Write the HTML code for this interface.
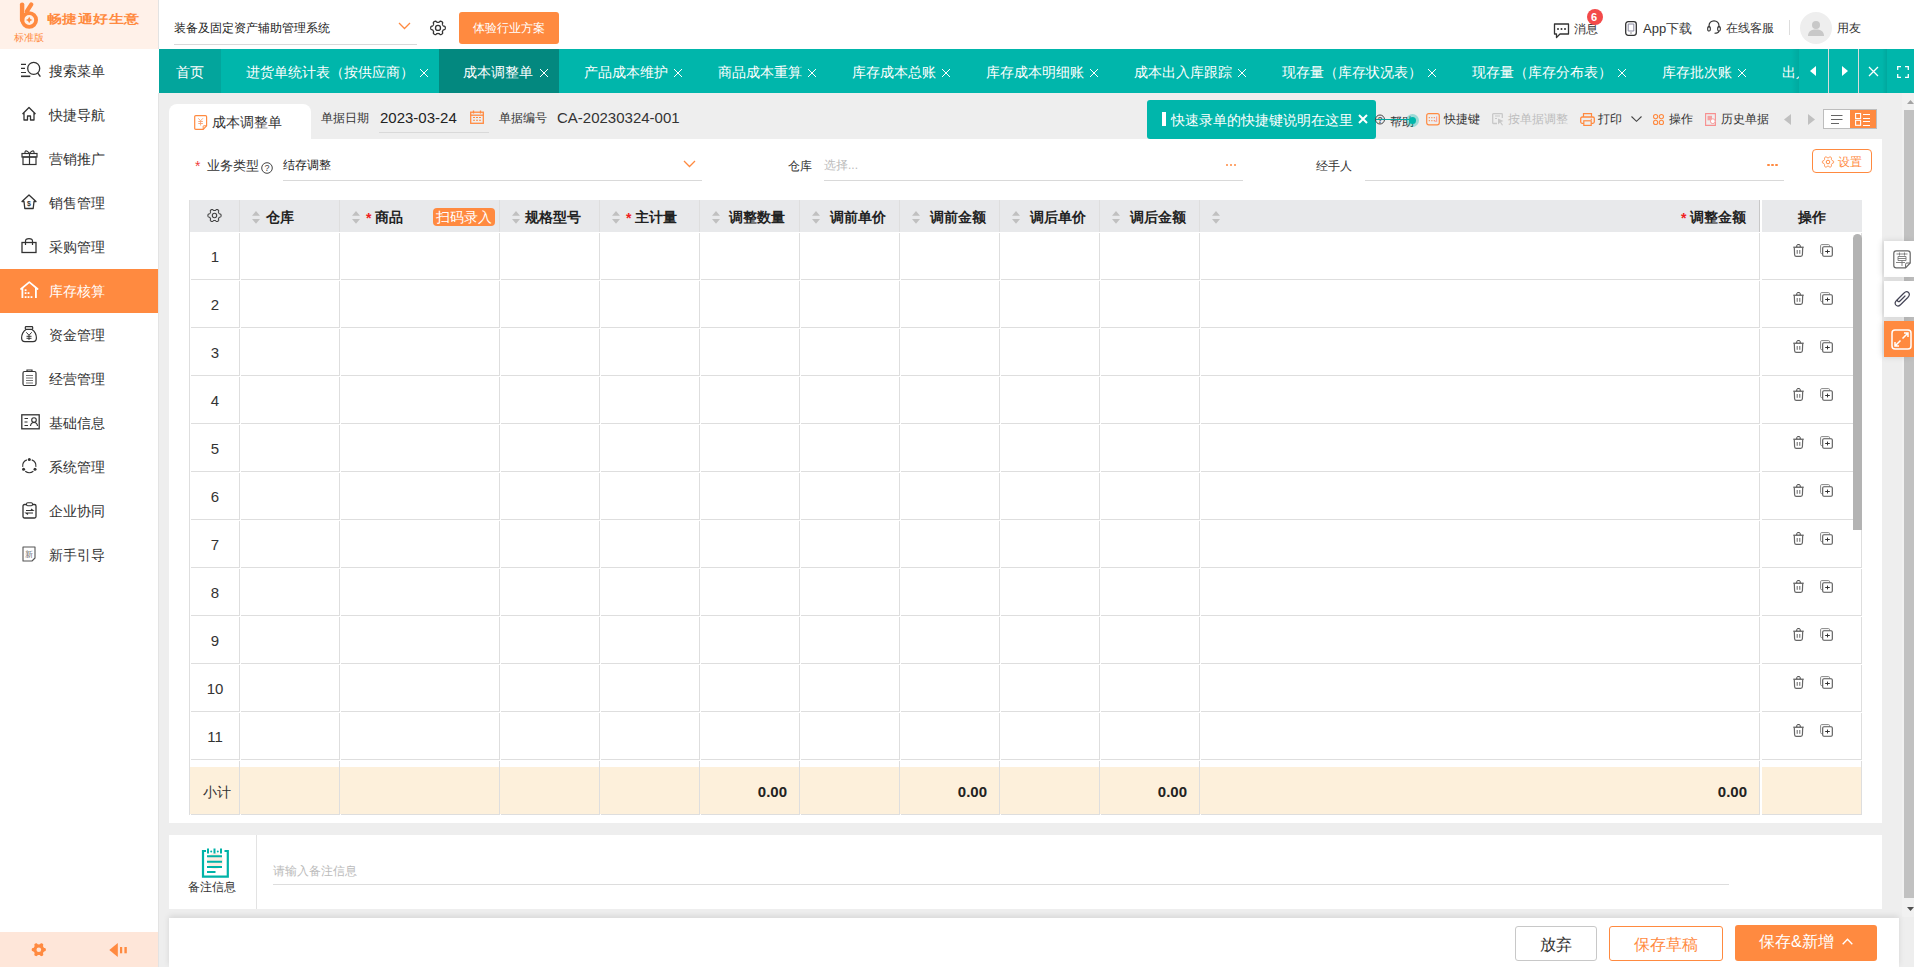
<!DOCTYPE html><html><head><meta charset="utf-8"><style>
*{box-sizing:border-box;margin:0;padding:0}
html,body{width:1914px;height:967px;overflow:hidden}
body{position:relative;background:#eeeeee;font-family:"Liberation Sans",sans-serif;color:#333;font-size:12px}
.a{position:absolute}
svg{display:block;position:absolute;overflow:visible}
.t{position:absolute;white-space:nowrap;line-height:1}
svg path:not([fill]){fill:none}
</style></head><body><div class="a" style="left:0px;top:0px;width:159px;height:967px;background:#fff;border-right:1px solid #e3e3e3"></div>
<div class="a" style="left:0px;top:0px;width:158px;height:49px;background:#fff1e9;"></div>
<svg style="left:16px;top:0px" width="30" height="32" viewBox="0 0 30 32"><path d="M6.1 4.6 V20" stroke="#ff8a40" stroke-width="4.4" stroke-linecap="round" fill="none"/><path d="M15.3 4.4 L10.8 11.3" stroke="#ff8a40" stroke-width="4.2" stroke-linecap="round"/><circle cx="13.2" cy="20" r="6.9" stroke="#ff8a40" stroke-width="3.8" fill="none"/><path d="M13.2 16.7 Q13.8 19.4 16.5 20 Q13.8 20.6 13.2 23.3 Q12.6 20.6 9.9 20 Q12.6 19.4 13.2 16.7Z" fill="#ff8a40"/></svg>
<div class="t" style="left:47px;top:13px;font-size:15px;color:#ff8a40;font-weight:bold;letter-spacing:0.4px;transform:scaleY(0.8);transform-origin:0 0">畅捷通好生意</div>
<div class="t" style="left:14px;top:33px;font-size:10px;color:#ff8a40;font-weight:normal;">标准版</div>
<svg style="left:20px;top:62px" width="20" height="16" viewBox="0 0 20 16"><path d="M1 2.3 H6 M1 6.4 H5 M1 10.5 H6" stroke="#333" stroke-width="1.2"/><path d="M1 14.3 H10.3" stroke="#333" stroke-width="1.6"/><circle cx="13.7" cy="6.4" r="6" stroke="#333" stroke-width="1.3" fill="none"/><path d="M17.6 10.8 L20.4 14.6" stroke="#333" stroke-width="1.4"/></svg>
<div class="t" style="left:49px;top:64px;font-size:14px;color:#333;font-weight:normal;">搜索菜单</div>
<svg style="left:21px;top:106px" width="16" height="15" viewBox="0 0 16 15"><path d="M1.5 8 L8 1.5 L14.5 8 M3 7 V14 H6.5 V10 H9.5 V14 H13 V7" stroke="#333" stroke-width="1.3" fill="none" stroke-linejoin="round"/></svg>
<div class="t" style="left:49px;top:108px;font-size:14px;color:#333;font-weight:normal;">快捷导航</div>
<svg style="left:21px;top:149px" width="17" height="17" viewBox="0 0 17 17"><rect x="1" y="4.5" width="15" height="3.5" stroke="#333" stroke-width="1.2" fill="none"/><rect x="2" y="8" width="13" height="7.5" stroke="#333" stroke-width="1.2" fill="none"/><path d="M8.5 4.5 V15.5" stroke="#333" stroke-width="1.2"/><path d="M8.5 4.5 C6 1 3.5 1 4 4.5 M8.5 4.5 C11 1 13.5 1 13 4.5" stroke="#333" stroke-width="1.1" fill="none"/></svg>
<div class="t" style="left:49px;top:152px;font-size:14px;color:#333;font-weight:normal;">营销推广</div>
<svg style="left:21px;top:194px" width="16" height="16" viewBox="0 0 16 16"><path d="M1 7.5 L8 1 L15 7.5 H13 L12.2 14.5 H3.8 L3 7.5 Z" stroke="#333" stroke-width="1.3" fill="none" stroke-linejoin="round"/><text x="8" y="11.5" font-size="7" text-anchor="middle" font-family="Liberation Sans" font-weight="bold" fill="#333">$</text></svg>
<div class="t" style="left:49px;top:196px;font-size:14px;color:#333;font-weight:normal;">销售管理</div>
<svg style="left:21px;top:237px" width="16" height="17" viewBox="0 0 16 17"><rect x="1" y="5.5" width="14" height="10" stroke="#333" stroke-width="1.3" fill="none"/><path d="M4.5 8 V4 C4.5 0.8 11.5 0.8 11.5 4 V8" stroke="#333" stroke-width="1.2" fill="none"/></svg>
<div class="t" style="left:49px;top:240px;font-size:14px;color:#333;font-weight:normal;">采购管理</div>
<div class="a" style="left:0px;top:269px;width:158px;height:44px;background:#ff8a40;"></div>
<svg style="left:20px;top:281px" width="18" height="17" viewBox="0 0 18 17"><path d="M1 8 L9.3 1.2 L17.6 8" stroke="#fff" stroke-width="1.7" fill="none" stroke-linejoin="round" stroke-linecap="round"/><path d="M2.4 7 V17 M15.9 7 V17" stroke="#fff" stroke-width="1.8"/><rect x="4.7" y="8.3" width="1.8" height="1.8" fill="#fff"/><rect x="4.7" y="11.2" width="1.8" height="1.8" fill="#fff"/><rect x="7.6" y="11.2" width="1.8" height="1.8" fill="#fff"/><rect x="4.7" y="15.2" width="1.8" height="1.8" fill="#fff"/><rect x="7.6" y="15.2" width="1.8" height="1.8" fill="#fff"/><rect x="10.6" y="15.2" width="1.8" height="1.8" fill="#fff"/></svg>
<div class="t" style="left:49px;top:284px;font-size:14px;color:#fff;font-weight:normal;">库存核算</div>
<svg style="left:21px;top:326px" width="16" height="17" viewBox="0 0 16 17"><rect x="4.3" y="0.7" width="7.4" height="2.6" rx="0.8" stroke="#333" stroke-width="1.2" fill="none"/><path d="M5 3.5 C1.5 6 0.6 9 0.6 12 C0.6 14.5 2 15.6 4 15.6 H12 C14 15.6 15.4 14.5 15.4 12 C15.4 9 14.5 6 11 3.5" stroke="#333" stroke-width="1.2" fill="none"/><path d="M5.3 6.3 L8 9.3 L10.7 6.3 M8 9.3 V14 M5.5 10.3 H10.5 M5.5 12.3 H10.5" stroke="#333" stroke-width="1" fill="none"/></svg>
<div class="t" style="left:49px;top:328px;font-size:14px;color:#333;font-weight:normal;">资金管理</div>
<svg style="left:21.5px;top:369px" width="15" height="18" viewBox="0 0 15 18"><rect x="1" y="2.5" width="13" height="14" rx="1.5" stroke="#333" stroke-width="1.2" fill="none"/><path d="M5 3 V1 H10 V3" stroke="#333" stroke-width="1.2" fill="none"/><path d="M4 6.5 H11 M4 9 H11 M4 11.5 H11 M4 14 H11" stroke="#777" stroke-width="1"/></svg>
<div class="t" style="left:49px;top:372px;font-size:14px;color:#333;font-weight:normal;">经营管理</div>
<svg style="left:21px;top:414px" width="19" height="16" viewBox="0 0 19 16"><rect x="0.8" y="0.8" width="17.4" height="14" stroke="#333" stroke-width="1.3" fill="none"/><path d="M3.5 4.5 H7 M3.5 8 H6.5 M3.5 11.5 H7" stroke="#333" stroke-width="1.1"/><circle cx="13" cy="6" r="2.3" stroke="#333" stroke-width="1.1" fill="none"/><path d="M9.5 12 C9.8 9 11 8.5 13 8.5 C15 8.5 16.2 9 16.5 12" stroke="#333" stroke-width="1.1" fill="none"/></svg>
<div class="t" style="left:49px;top:416px;font-size:14px;color:#333;font-weight:normal;">基础信息</div>
<svg style="left:21px;top:458px" width="17" height="15" viewBox="0 0 17 15"><g stroke="#333" stroke-width="1.1" fill="none"><path d="M10.77 1.88 A6.6 6.6 0 0 1 14.84 8.92"/><path d="M12.36 13.20 A6.6 6.6 0 0 1 4.24 13.20"/><path d="M1.76 8.92 A6.6 6.6 0 0 1 5.83 1.88"/></g><circle cx="8.30" cy="1.40" r="1.5" fill="#333"/><circle cx="14.02" cy="11.30" r="1.5" fill="#333"/><circle cx="2.58" cy="11.30" r="1.5" fill="#333"/></svg>
<div class="t" style="left:49px;top:460px;font-size:14px;color:#333;font-weight:normal;">系统管理</div>
<svg style="left:21.5px;top:502px" width="15" height="17" viewBox="0 0 15 17"><rect x="1" y="2.5" width="13" height="13.5" rx="1.5" stroke="#333" stroke-width="1.3" fill="none"/><rect x="4.5" y="0.8" width="6" height="3" rx="1.2" stroke="#333" stroke-width="1.1" fill="#fff"/><path d="M4 8.5 H11 L9 7 M11 11 H4 L6 12.5" stroke="#333" stroke-width="1.1" fill="none"/></svg>
<div class="t" style="left:49px;top:504px;font-size:14px;color:#333;font-weight:normal;">企业协同</div>
<svg style="left:21px;top:546px" width="16" height="16" viewBox="0 0 16 16"><path d="M2 1 H14 V12 L11 15 H2 Z" stroke="#555" stroke-width="1.1" fill="none" stroke-linejoin="round"/><text x="8" y="11" font-size="8" text-anchor="middle" fill="#666">新</text></svg>
<div class="t" style="left:49px;top:548px;font-size:14px;color:#333;font-weight:normal;">新手引导</div>
<div class="a" style="left:0px;top:932px;width:158px;height:35px;background:#fee6d9;"></div>
<svg style="left:31px;top:942px" width="15" height="15" viewBox="0 0 15 15"><path d="M14.90 7.70 L14.87 8.07 L14.78 8.43 L14.62 8.78 L14.38 9.10 L13.79 9.30 L13.19 9.45 L12.93 9.67 L12.72 9.89 L12.54 10.12 L12.39 10.35 L12.26 10.60 L12.15 10.86 L12.07 11.16 L12.01 11.49 L12.18 12.08 L12.30 12.70 L12.15 13.07 L11.93 13.38 L11.66 13.64 L11.35 13.85 L11.01 14.01 L10.65 14.11 L10.28 14.15 L9.88 14.10 L9.40 13.69 L8.98 13.25 L8.66 13.12 L8.36 13.05 L8.08 13.01 L7.80 13.00 L7.52 13.01 L7.24 13.05 L6.94 13.12 L6.62 13.25 L6.20 13.69 L5.72 14.10 L5.32 14.15 L4.95 14.11 L4.59 14.01 L4.25 13.85 L3.94 13.64 L3.67 13.38 L3.45 13.07 L3.30 12.70 L3.42 12.08 L3.59 11.49 L3.53 11.16 L3.45 10.86 L3.34 10.60 L3.21 10.35 L3.06 10.12 L2.88 9.89 L2.67 9.67 L2.41 9.45 L1.81 9.30 L1.22 9.10 L0.98 8.78 L0.82 8.43 L0.73 8.07 L0.70 7.70 L0.73 7.33 L0.82 6.97 L0.98 6.62 L1.22 6.30 L1.81 6.10 L2.41 5.95 L2.67 5.73 L2.88 5.51 L3.06 5.28 L3.21 5.05 L3.34 4.80 L3.45 4.54 L3.53 4.24 L3.59 3.91 L3.42 3.32 L3.30 2.70 L3.45 2.33 L3.67 2.02 L3.94 1.76 L4.25 1.55 L4.59 1.39 L4.95 1.29 L5.32 1.25 L5.72 1.30 L6.20 1.71 L6.62 2.15 L6.94 2.28 L7.24 2.35 L7.52 2.39 L7.80 2.40 L8.08 2.39 L8.36 2.35 L8.66 2.28 L8.98 2.15 L9.40 1.71 L9.88 1.30 L10.28 1.25 L10.65 1.29 L11.01 1.39 L11.35 1.55 L11.66 1.76 L11.93 2.02 L12.15 2.33 L12.30 2.70 L12.18 3.32 L12.01 3.91 L12.07 4.24 L12.15 4.54 L12.26 4.80 L12.39 5.05 L12.54 5.28 L12.72 5.51 L12.93 5.73 L13.19 5.95 L13.79 6.10 L14.38 6.30 L14.62 6.62 L14.78 6.97 L14.87 7.33 L14.90 7.70Z" fill="#ff8a40"/><circle cx="7.8" cy="7.7" r="2.3" fill="#fee6d9"/></svg>
<svg style="left:109px;top:943px" width="19" height="15" viewBox="0 0 19 15"><path d="M0.3 7 L8.8 0 V14 Z" fill="#ff8a40"/><rect x="11" y="4" width="2.2" height="6.3" fill="#ff8a40"/><rect x="15.4" y="4" width="2.4" height="6.3" fill="#ff8a40"/></svg>
<div class="a" style="left:159px;top:0px;width:1755px;height:49px;background:#fff;"></div>
<div class="t" style="left:174px;top:22px;font-size:12px;color:#222;font-weight:normal;">装备及固定资产辅助管理系统</div>
<div class="a" style="left:174px;top:44px;width:243px;height:1px;background:#d9d9d9;"></div>
<svg style="left:398px;top:22px" width="13" height="8" viewBox="0 0 13 8"><path d="M1 1 L6.5 6.5 L12 1" stroke="#ff8a40" stroke-width="1.3" fill="none"/></svg>
<svg style="left:429px;top:20px" width="18" height="16" viewBox="0 0 18 16"><path d="M16.30 7.90 L16.28 8.28 L16.20 8.66 L16.07 9.02 L15.86 9.36 L15.23 9.57 L14.60 9.72 L14.36 9.96 L14.17 10.20 L14.00 10.45 L13.85 10.70 L13.71 10.96 L13.58 11.23 L13.46 11.51 L13.37 11.84 L13.56 12.46 L13.69 13.11 L13.50 13.46 L13.26 13.76 L12.97 14.01 L12.65 14.22 L12.31 14.39 L11.94 14.51 L11.56 14.58 L11.17 14.57 L10.67 14.13 L10.22 13.66 L9.90 13.57 L9.59 13.53 L9.29 13.51 L9.00 13.50 L8.71 13.51 L8.41 13.53 L8.10 13.57 L7.78 13.66 L7.33 14.13 L6.83 14.57 L6.44 14.58 L6.06 14.51 L5.69 14.39 L5.35 14.22 L5.03 14.01 L4.74 13.76 L4.50 13.46 L4.31 13.11 L4.44 12.46 L4.63 11.84 L4.54 11.51 L4.42 11.23 L4.29 10.96 L4.15 10.70 L4.00 10.45 L3.83 10.20 L3.64 9.96 L3.40 9.72 L2.77 9.57 L2.14 9.36 L1.93 9.02 L1.80 8.66 L1.72 8.28 L1.70 7.90 L1.72 7.52 L1.80 7.14 L1.93 6.78 L2.14 6.44 L2.77 6.23 L3.40 6.08 L3.64 5.84 L3.83 5.60 L4.00 5.35 L4.15 5.10 L4.29 4.84 L4.42 4.57 L4.54 4.29 L4.63 3.96 L4.44 3.34 L4.31 2.69 L4.50 2.34 L4.74 2.04 L5.03 1.79 L5.35 1.58 L5.69 1.41 L6.06 1.29 L6.44 1.22 L6.83 1.23 L7.33 1.67 L7.78 2.14 L8.10 2.23 L8.41 2.27 L8.71 2.29 L9.00 2.30 L9.29 2.29 L9.59 2.27 L9.90 2.23 L10.22 2.14 L10.67 1.67 L11.17 1.23 L11.56 1.22 L11.94 1.29 L12.31 1.41 L12.65 1.58 L12.97 1.79 L13.26 2.04 L13.50 2.34 L13.69 2.69 L13.56 3.34 L13.37 3.96 L13.46 4.29 L13.58 4.57 L13.71 4.84 L13.85 5.10 L14.00 5.35 L14.17 5.60 L14.36 5.84 L14.60 6.08 L15.23 6.23 L15.86 6.44 L16.07 6.78 L16.20 7.14 L16.28 7.52 L16.30 7.90Z" stroke="#333" stroke-width="1.3" fill="none"/><circle cx="9" cy="7.9" r="2.5" stroke="#333" stroke-width="1.3" fill="none"/></svg>
<div class="a" style="left:459px;top:12px;width:100px;height:32px;background:#ff8a40;border-radius:3px"></div>
<div class="t" style="left:473px;top:22px;font-size:12px;color:#fff;font-weight:normal;">体验行业方案</div>
<svg style="left:1553px;top:22px" width="17" height="17" viewBox="0 0 17 17"><path d="M1.5 2 H15.5 V12 H7 L3.5 15.5 V12 H1.5 Z" stroke="#333" stroke-width="1.3" fill="none" stroke-linejoin="round"/><circle cx="5" cy="7" r="1" fill="#333"/><circle cx="8.5" cy="7" r="1" fill="#333"/><circle cx="12" cy="7" r="1" fill="#333"/></svg>
<div class="t" style="left:1574px;top:23px;font-size:12px;color:#333;font-weight:normal;">消息</div>
<div class="a" style="left:1587px;top:9px;width:16px;height:16px;background:#f34a4a;border-radius:50%"></div>
<div class="t" style="left:1591px;top:12px;font-size:11px;color:#fff;font-weight:bold;">6</div>
<svg style="left:1625px;top:21px" width="12" height="15" viewBox="0 0 12 15"><rect x="0.7" y="0.7" width="10.6" height="13.6" rx="2.5" stroke="#333" stroke-width="1.3" fill="none"/><path d="M3.2 3 H8.8 V10 H3.2Z" stroke="#8a8aa0" stroke-width="1" fill="none"/><path d="M5 12 H7" stroke="#999" stroke-width="1"/></svg>
<div class="t" style="left:1643px;top:22px;font-size:13px;color:#333;font-weight:normal;">App下载</div>
<svg style="left:1707px;top:20px" width="14" height="14" viewBox="0 0 14 14"><path d="M2 8 V6 C2 2.8 4.2 0.8 7 0.8 C9.8 0.8 12 2.8 12 6 V8" stroke="#333" stroke-width="1.2" fill="none"/><rect x="0.7" y="6.5" width="2.6" height="4.5" rx="1.2" stroke="#333" stroke-width="1.1" fill="none"/><rect x="10.7" y="6.5" width="2.6" height="4.5" rx="1.2" stroke="#333" stroke-width="1.1" fill="none"/><path d="M12 11 C11.5 12.8 10 13.3 7.5 13.3" stroke="#333" stroke-width="1.1" fill="none"/></svg>
<div class="t" style="left:1726px;top:22px;font-size:12px;color:#333;font-weight:normal;">在线客服</div>
<div class="a" style="left:1789px;top:20px;width:1px;height:15px;background:#ddd;"></div>
<div class="a" style="left:1800px;top:12px;width:32px;height:32px;background:#eeeeee;border-radius:50%"></div>
<svg style="left:1807px;top:19px" width="18" height="18" viewBox="0 0 18 18"><circle cx="9" cy="6" r="4" fill="#c8c8c8"/><path d="M1 17 C1 12 4.5 10.5 9 10.5 C13.5 10.5 17 12 17 17Z" fill="#c8c8c8"/></svg>
<div class="t" style="left:1837px;top:22px;font-size:12px;color:#333;font-weight:normal;">用友</div>
<div class="a" style="left:158px;top:49px;width:1px;height:44px;background:#fff;"></div>
<div class="a" style="left:159px;top:49px;width:1755px;height:44px;background:#00b6ab;"></div>
<div class="a" style="left:159px;top:49px;width:62px;height:44px;background:#03a59c;"></div>
<div class="t" style="left:176px;top:65px;font-size:14px;color:#fff;font-weight:normal;">首页</div>
<div class="t" style="left:246px;top:65px;font-size:14px;color:#fff;font-weight:normal;">进货单统计表（按供应商）</div>
<svg style="left:419px;top:68px" width="10" height="10" viewBox="0 0 10 10"><path d="M1 1 L9 9 M9 1 L1 9" stroke="#fff" stroke-width="1"/></svg>
<div class="a" style="left:439px;top:49px;width:120px;height:44px;background:#03887f;"></div>
<div class="t" style="left:463px;top:65px;font-size:14px;color:#fff;font-weight:normal;">成本调整单</div>
<svg style="left:539px;top:68px" width="10" height="10" viewBox="0 0 10 10"><path d="M1 1 L9 9 M9 1 L1 9" stroke="#fff" stroke-width="1"/></svg>
<div class="t" style="left:584px;top:65px;font-size:14px;color:#fff;font-weight:normal;">产品成本维护</div>
<svg style="left:673px;top:68px" width="10" height="10" viewBox="0 0 10 10"><path d="M1 1 L9 9 M9 1 L1 9" stroke="#fff" stroke-width="1"/></svg>
<div class="t" style="left:718px;top:65px;font-size:14px;color:#fff;font-weight:normal;">商品成本重算</div>
<svg style="left:807px;top:68px" width="10" height="10" viewBox="0 0 10 10"><path d="M1 1 L9 9 M9 1 L1 9" stroke="#fff" stroke-width="1"/></svg>
<div class="t" style="left:852px;top:65px;font-size:14px;color:#fff;font-weight:normal;">库存成本总账</div>
<svg style="left:941px;top:68px" width="10" height="10" viewBox="0 0 10 10"><path d="M1 1 L9 9 M9 1 L1 9" stroke="#fff" stroke-width="1"/></svg>
<div class="t" style="left:986px;top:65px;font-size:14px;color:#fff;font-weight:normal;">库存成本明细账</div>
<svg style="left:1089px;top:68px" width="10" height="10" viewBox="0 0 10 10"><path d="M1 1 L9 9 M9 1 L1 9" stroke="#fff" stroke-width="1"/></svg>
<div class="t" style="left:1134px;top:65px;font-size:14px;color:#fff;font-weight:normal;">成本出入库跟踪</div>
<svg style="left:1237px;top:68px" width="10" height="10" viewBox="0 0 10 10"><path d="M1 1 L9 9 M9 1 L1 9" stroke="#fff" stroke-width="1"/></svg>
<div class="t" style="left:1282px;top:65px;font-size:14px;color:#fff;font-weight:normal;">现存量（库存状况表）</div>
<svg style="left:1427px;top:68px" width="10" height="10" viewBox="0 0 10 10"><path d="M1 1 L9 9 M9 1 L1 9" stroke="#fff" stroke-width="1"/></svg>
<div class="t" style="left:1472px;top:65px;font-size:14px;color:#fff;font-weight:normal;">现存量（库存分布表）</div>
<svg style="left:1617px;top:68px" width="10" height="10" viewBox="0 0 10 10"><path d="M1 1 L9 9 M9 1 L1 9" stroke="#fff" stroke-width="1"/></svg>
<div class="t" style="left:1662px;top:65px;font-size:14px;color:#fff;font-weight:normal;">库存批次账</div>
<svg style="left:1737px;top:68px" width="10" height="10" viewBox="0 0 10 10"><path d="M1 1 L9 9 M9 1 L1 9" stroke="#fff" stroke-width="1"/></svg>
<div class="t" style="left:1782px;top:65px;font-size:14px;color:#fff;font-weight:normal;">出入</div>
<div class="a" style="left:1791px;top:49px;width:8px;height:44px;background:linear-gradient(to right, rgba(0,0,0,0), rgba(0,0,0,0.07));"></div>
<div class="a" style="left:1799px;top:49px;width:115px;height:44px;background:#00b6ab;"></div>
<div class="a" style="left:1828px;top:49px;width:1px;height:44px;background:#d9dcdc;"></div>
<div class="a" style="left:1858px;top:49px;width:1px;height:44px;background:#d9dcdc;"></div>
<div class="a" style="left:1882px;top:49px;width:5px;height:44px;background:linear-gradient(to right, rgba(0,0,0,0), rgba(0,0,0,0.08));"></div>
<svg style="left:1810px;top:66px" width="7" height="10" viewBox="0 0 7 10"><path d="M6 0 V10 L0 5Z" fill="#fff"/></svg>
<svg style="left:1841px;top:66px" width="7" height="10" viewBox="0 0 7 10"><path d="M1 0 V10 L7 5Z" fill="#fff"/></svg>
<svg style="left:1868px;top:66px" width="11" height="11" viewBox="0 0 11 11"><path d="M1 1 L10 10 M10 1 L1 10" stroke="#fff" stroke-width="1.3"/></svg>
<svg style="left:1897px;top:66px" width="12" height="12" viewBox="0 0 12 12"><path d="M0.7 4 V0.7 H4 M8 0.7 H11.3 V4 M11.3 8 V11.3 H8 M4 11.3 H0.7 V8" stroke="#fff" stroke-width="1.3" fill="none"/></svg>
<div class="a" style="left:1902px;top:93px;width:12px;height:824px;background:#f1f1f1;"></div>
<svg style="left:1907px;top:100px" width="7" height="4" viewBox="0 0 7 4"><path d="M0 4 L3.5 0 L7 4Z" fill="#a3a3a3"/></svg>
<div class="a" style="left:1904px;top:110px;width:10px;height:788px;background:#c1c1c1;"></div>
<svg style="left:1907px;top:907px" width="7" height="4" viewBox="0 0 7 4"><path d="M0 0 L3.5 4 L7 0Z" fill="#505050"/></svg>
<div class="a" style="left:169px;top:104px;width:142px;height:40px;background:#fff;border-radius:8px 8px 0 0"></div>
<svg style="left:194px;top:115px" width="14" height="15" viewBox="0 0 14 15"><path d="M1.8 0.7 H11.5 Q12.6 0.7 12.6 1.8 V10.8 L9.2 14.3 H1.8 Q0.7 14.3 0.7 13.2 V1.8 Q0.7 0.7 1.8 0.7Z" stroke="#ff8a40" stroke-width="1.2" fill="none"/><path d="M4.3 3.3 L6.6 5.8 L8.9 3.3 M6.6 5.8 V10.5 M4.3 6.5 H8.9 M4.3 8.5 H8.9" stroke="#f9a070" stroke-width="0.9" fill="none"/><path d="M9.2 14.3 V11.3 Q9.2 10.8 9.7 10.8 H12.6" stroke="#ff8a40" stroke-width="1" fill="none"/></svg>
<div class="t" style="left:212px;top:115px;font-size:14px;color:#333;font-weight:normal;">成本调整单</div>
<div class="t" style="left:321px;top:112px;font-size:12px;color:#333;font-weight:normal;">单据日期</div>
<div class="t" style="left:380px;top:110px;font-size:15px;color:#222;font-weight:normal;">2023-03-24</div>
<div class="a" style="left:379px;top:132px;width:110px;height:1px;background:#d9d9d9;"></div>
<svg style="left:470px;top:110px" width="14" height="14" viewBox="0 0 14 14"><rect x="0.7" y="2.2" width="12.6" height="11.1" stroke="#ff8a40" stroke-width="1.3" fill="none"/><path d="M0.7 5.2 H13.3" stroke="#ff8a40" stroke-width="1.3"/><path d="M3.5 0.5 V3.5 M10.5 0.5 V3.5" stroke="#ff8a40" stroke-width="1.3"/><path d="M3 7.5 h2 M6 7.5 h2 M9 7.5 h2 M3 10.3 h2 M6 10.3 h2 M9 10.3 h2" stroke="#ff8a40" stroke-width="1.1"/></svg>
<div class="t" style="left:499px;top:112px;font-size:12px;color:#333;font-weight:normal;">单据编号</div>
<div class="t" style="left:557px;top:110px;font-size:15px;color:#333;font-weight:normal;">CA-20230324-001</div>
<div class="a" style="left:1147px;top:100px;width:229px;height:39px;background:#00b6ab;border-radius:3px"></div>
<div class="a" style="left:1162px;top:112px;width:4px;height:14px;background:#fff;"></div>
<div class="t" style="left:1171px;top:113px;font-size:14px;color:#fff;font-weight:normal;">快速录单的快捷键说明在这里</div>
<svg style="left:1358px;top:114px" width="10" height="10" viewBox="0 0 10 10"><path d="M1 1 L9 9 M9 1 L1 9" stroke="#fff" stroke-width="2"/></svg>
<svg style="left:1375px;top:114px" width="11" height="11" viewBox="0 0 11 11"><circle cx="5" cy="5.5" r="4.5" stroke="#444" stroke-width="1" fill="none"/><text x="5" y="8.6" font-size="8.5" text-anchor="middle" font-family="Liberation Sans" font-weight="bold" fill="#555">?</text></svg>
<div class="t" style="left:1390px;top:115.5px;font-size:12px;color:#333;font-weight:normal;">帮助</div>
<div class="a" style="left:1376px;top:119px;width:34px;height:1px;background:#00a89e;"></div>
<div class="a" style="left:1406px;top:114px;width:13px;height:13px;background:rgba(0,182,171,0.35);border-radius:50%"></div>
<div class="a" style="left:1409px;top:117px;width:7px;height:7px;background:#00b6ab;border-radius:50%"></div>
<svg style="left:1426px;top:113px" width="14" height="13" viewBox="0 0 14 13"><rect x="0.7" y="0.7" width="12.6" height="11.1" rx="2" stroke="#ff8a40" stroke-width="1.2" fill="none"/><path d="M2.7 4.6 h1.3 M5.2 4.6 h1.3 M7.7 4.6 h1.3 M2.7 7.6 h1.3 M5.2 7.6 h1.3 M7.7 7.6 h1.3" stroke="#f59a6a" stroke-width="1.2"/><path d="M10.6 3.6 V8.3 H8.5" stroke="#f7a0a0" stroke-width="1.1" fill="none"/></svg>
<div class="t" style="left:1444px;top:113px;font-size:12px;color:#333;font-weight:normal;">快捷键</div>
<svg style="left:1492px;top:113px" width="12" height="13" viewBox="0 0 12 13"><path d="M5 10.5 H1.5 Q0.7 10.5 0.7 9.7 V1.5 Q0.7 0.7 1.5 0.7 H9.5 Q10.3 0.7 10.3 1.5 V5" stroke="#c8c8c8" stroke-width="1.3" fill="none"/><path d="M3 3 H8 M3 5.5 H5" stroke="#c8c8c8" stroke-width="1.1"/><path d="M6 5.5 L11.5 8 L9 9 L11 12 L10 12.5 L8 9.5 L6 11.5Z" fill="#c8c8c8"/></svg>
<div class="t" style="left:1508px;top:113px;font-size:12px;color:#bdbdbd;font-weight:normal;">按单据调整</div>
<svg style="left:1580px;top:113px" width="15" height="13" viewBox="0 0 15 13"><path d="M3.5 4 V0.7 H11.5 V4" stroke="#ff8a40" stroke-width="1.2" fill="none"/><rect x="0.7" y="4" width="13.6" height="6.3" rx="1.5" stroke="#ff8a40" stroke-width="1.3" fill="none"/><rect x="3.8" y="7.8" width="7.4" height="4.6" stroke="#ff8a40" stroke-width="1.2" fill="#eeeeee"/><circle cx="11.3" cy="6.2" r="0.7" fill="#ff8a40"/></svg>
<div class="t" style="left:1598px;top:113px;font-size:12px;color:#333;font-weight:normal;">打印</div>
<svg style="left:1631px;top:116px" width="11" height="6" viewBox="0 0 11 6"><path d="M0.5 0.5 L5.5 5.3 L10.5 0.5" stroke="#444" stroke-width="1.1" fill="none"/></svg>
<svg style="left:1653px;top:114px" width="11" height="11" viewBox="0 0 11 11"><circle cx="2.6" cy="2.6" r="2.1" stroke="#ff8a40" stroke-width="1.1" fill="none"/><circle cx="2.6" cy="8.4" r="2.1" stroke="#ff8a40" stroke-width="1.1" fill="none"/><circle cx="8.4" cy="2.6" r="2.1" stroke="#ff8a40" stroke-width="1.1" fill="none"/><circle cx="8.4" cy="8.4" r="2.1" stroke="#ff8a40" stroke-width="1.1" fill="none"/></svg>
<div class="t" style="left:1669px;top:113px;font-size:12px;color:#333;font-weight:normal;">操作</div>
<svg style="left:1705px;top:113px" width="11" height="13" viewBox="0 0 11 13"><path d="M0.6 0.6 H10.4 V12.4 H0.6Z" stroke="#f78f8f" stroke-width="1.1" fill="none"/><rect x="2.5" y="2.8" width="4.5" height="4.5" fill="#f5a0a0"/><circle cx="7.8" cy="8.2" r="2.4" fill="#fff" stroke="#f5a0a0" stroke-width="1"/></svg>
<div class="t" style="left:1721px;top:113px;font-size:12px;color:#333;font-weight:normal;">历史单据</div>
<svg style="left:1784px;top:114px" width="7" height="11" viewBox="0 0 7 11"><path d="M7 0 V11 L0 5.5Z" fill="#c0c0c0"/></svg>
<svg style="left:1808px;top:114px" width="7" height="11" viewBox="0 0 7 11"><path d="M0 0 V11 L7 5.5Z" fill="#c0c0c0"/></svg>
<div class="a" style="left:1823px;top:109px;width:54px;height:20px;background:#fff;border:1px solid #bdbdbd"></div>
<div class="a" style="left:1850px;top:110px;width:26px;height:18px;background:#ff8a40;"></div>
<svg style="left:1831px;top:114px" width="12" height="10" viewBox="0 0 12 10"><path d="M0 1.5 H11.5 M0 5.5 H11.5 M0 9.5 H8" stroke="#666" stroke-width="1"/></svg>
<svg style="left:1855px;top:113px" width="16" height="13" viewBox="0 0 16 13"><rect x="0.6" y="0.5" width="5" height="5" stroke="#fff" stroke-width="1.1" fill="none"/><rect x="0.6" y="7.3" width="5" height="5" stroke="#fff" stroke-width="1.1" fill="none"/><path d="M8 1.5 H15 M8 5.5 H15 M8 8.5 H15 M8 12.5 H15" stroke="#fff" stroke-width="1"/></svg>
<div class="a" style="left:169px;top:139px;width:1713px;height:684px;background:#fff;"></div>
<div class="t" style="left:195px;top:159px;font-size:14px;color:#f04040;font-weight:normal;">*</div>
<div class="t" style="left:207px;top:159px;font-size:13px;color:#333;font-weight:normal;">业务类型</div>
<svg style="left:261px;top:162px" width="12" height="12" viewBox="0 0 12 12"><circle cx="6" cy="6" r="5.3" stroke="#444" stroke-width="1" fill="none"/><text x="6" y="9.3" font-size="9" text-anchor="middle" font-family="Liberation Sans" fill="#444">?</text></svg>
<div class="t" style="left:283px;top:159px;font-size:12px;color:#222;font-weight:normal;">结存调整</div>
<div class="a" style="left:283px;top:180px;width:419px;height:1px;background:#d9d9d9;"></div>
<svg style="left:683px;top:160px" width="13" height="8" viewBox="0 0 13 8"><path d="M1 1 L6.5 6.5 L12 1" stroke="#ff8a40" stroke-width="1.3" fill="none"/></svg>
<div class="t" style="left:788px;top:160px;font-size:12px;color:#333;font-weight:normal;">仓库</div>
<div class="t" style="left:824px;top:159px;font-size:12px;color:#bbb;font-weight:normal;">选择...</div>
<div class="a" style="left:824px;top:180px;width:419px;height:1px;background:#d9d9d9;"></div>
<div class="a" style="left:1225.5px;top:163.5px;width:2.5px;height:2.5px;background:#ff8a40;border-radius:50%"></div>
<div class="a" style="left:1229.5px;top:163.5px;width:2.5px;height:2.5px;background:#ff8a40;border-radius:50%"></div>
<div class="a" style="left:1233.5px;top:163.5px;width:2.5px;height:2.5px;background:#ff8a40;border-radius:50%"></div>
<div class="t" style="left:1316px;top:160px;font-size:12px;color:#333;font-weight:normal;">经手人</div>
<div class="a" style="left:1365px;top:180px;width:419px;height:1px;background:#d9d9d9;"></div>
<div class="a" style="left:1767px;top:163.5px;width:2.5px;height:2.5px;background:#ff8a40;border-radius:50%"></div>
<div class="a" style="left:1771px;top:163.5px;width:2.5px;height:2.5px;background:#ff8a40;border-radius:50%"></div>
<div class="a" style="left:1775px;top:163.5px;width:2.5px;height:2.5px;background:#ff8a40;border-radius:50%"></div>
<div class="a" style="left:1812px;top:149px;width:60px;height:24px;background:#fff;border:1px solid #ff8a40;border-radius:4px"></div>
<svg style="left:1822px;top:156px" width="12" height="12" viewBox="0 0 12 12"><path d="M11.60 6.00 L11.58 6.29 L11.52 6.58 L11.41 6.86 L11.25 7.12 L10.73 7.27 L10.22 7.37 L10.03 7.55 L9.88 7.73 L9.75 7.91 L9.64 8.10 L9.53 8.29 L9.44 8.50 L9.36 8.72 L9.30 8.97 L9.46 9.46 L9.59 9.99 L9.45 10.26 L9.26 10.49 L9.04 10.69 L8.80 10.85 L8.54 10.98 L8.26 11.07 L7.96 11.12 L7.66 11.10 L7.27 10.73 L6.92 10.34 L6.68 10.27 L6.44 10.23 L6.22 10.21 L6.00 10.20 L5.78 10.21 L5.56 10.23 L5.32 10.27 L5.08 10.34 L4.73 10.73 L4.34 11.10 L4.04 11.12 L3.74 11.07 L3.46 10.98 L3.20 10.85 L2.96 10.69 L2.74 10.49 L2.55 10.26 L2.41 9.99 L2.54 9.46 L2.70 8.97 L2.64 8.72 L2.56 8.50 L2.47 8.29 L2.36 8.10 L2.25 7.91 L2.12 7.73 L1.97 7.55 L1.78 7.37 L1.27 7.27 L0.75 7.12 L0.59 6.86 L0.48 6.58 L0.42 6.29 L0.40 6.00 L0.42 5.71 L0.48 5.42 L0.59 5.14 L0.75 4.88 L1.27 4.73 L1.78 4.63 L1.97 4.45 L2.12 4.27 L2.25 4.09 L2.36 3.90 L2.47 3.71 L2.56 3.50 L2.64 3.28 L2.70 3.03 L2.54 2.54 L2.41 2.01 L2.55 1.74 L2.74 1.51 L2.96 1.31 L3.20 1.15 L3.46 1.02 L3.74 0.93 L4.04 0.88 L4.34 0.90 L4.73 1.27 L5.08 1.66 L5.32 1.73 L5.56 1.77 L5.78 1.79 L6.00 1.80 L6.22 1.79 L6.44 1.77 L6.68 1.73 L6.92 1.66 L7.27 1.27 L7.66 0.90 L7.96 0.88 L8.26 0.93 L8.54 1.02 L8.80 1.15 L9.04 1.31 L9.26 1.51 L9.45 1.74 L9.59 2.01 L9.46 2.54 L9.30 3.03 L9.36 3.28 L9.44 3.50 L9.53 3.71 L9.64 3.90 L9.75 4.09 L9.88 4.27 L10.03 4.45 L10.22 4.63 L10.73 4.73 L11.25 4.88 L11.41 5.14 L11.52 5.42 L11.58 5.71 L11.60 6.00Z" stroke="#ff8a40" stroke-width="1" fill="none"/><circle cx="6" cy="6" r="1.8" stroke="#ff8a40" stroke-width="1" fill="none"/></svg>
<div class="t" style="left:1838px;top:156px;font-size:12px;color:#ff8a40;font-weight:normal;">设置</div>
<div class="a" style="left:190px;top:200px;width:1569px;height:32px;background:#e8e9eb;"></div>
<div class="a" style="left:1762px;top:200px;width:100px;height:32px;background:#e8e9eb;"></div>
<div class="a" style="left:239px;top:200px;width:1px;height:32px;background:#dedede;"></div>
<div class="a" style="left:339px;top:200px;width:1px;height:32px;background:#dedede;"></div>
<div class="a" style="left:499px;top:200px;width:1px;height:32px;background:#dedede;"></div>
<div class="a" style="left:599px;top:200px;width:1px;height:32px;background:#dedede;"></div>
<div class="a" style="left:699px;top:200px;width:1px;height:32px;background:#dedede;"></div>
<div class="a" style="left:799px;top:200px;width:1px;height:32px;background:#dedede;"></div>
<div class="a" style="left:899px;top:200px;width:1px;height:32px;background:#dedede;"></div>
<div class="a" style="left:999px;top:200px;width:1px;height:32px;background:#dedede;"></div>
<div class="a" style="left:1099px;top:200px;width:1px;height:32px;background:#dedede;"></div>
<div class="a" style="left:1199px;top:200px;width:1px;height:32px;background:#dedede;"></div>
<div class="a" style="left:1759px;top:200px;width:1px;height:32px;background:#c8c8c8;"></div>
<div class="a" style="left:189px;top:200px;width:1px;height:615px;background:#dedede;"></div>
<div class="a" style="left:239px;top:233px;width:1px;height:47px;background:#dedede;"></div>
<div class="a" style="left:191px;top:279px;width:48px;height:1px;background:#dedede;"></div>
<div class="a" style="left:339px;top:233px;width:1px;height:47px;background:#dedede;"></div>
<div class="a" style="left:241px;top:279px;width:99px;height:1px;background:#dedede;"></div>
<div class="a" style="left:499px;top:233px;width:1px;height:47px;background:#dedede;"></div>
<div class="a" style="left:341px;top:279px;width:159px;height:1px;background:#dedede;"></div>
<div class="a" style="left:599px;top:233px;width:1px;height:47px;background:#dedede;"></div>
<div class="a" style="left:501px;top:279px;width:99px;height:1px;background:#dedede;"></div>
<div class="a" style="left:699px;top:233px;width:1px;height:47px;background:#dedede;"></div>
<div class="a" style="left:601px;top:279px;width:99px;height:1px;background:#dedede;"></div>
<div class="a" style="left:799px;top:233px;width:1px;height:47px;background:#dedede;"></div>
<div class="a" style="left:701px;top:279px;width:99px;height:1px;background:#dedede;"></div>
<div class="a" style="left:899px;top:233px;width:1px;height:47px;background:#dedede;"></div>
<div class="a" style="left:801px;top:279px;width:99px;height:1px;background:#dedede;"></div>
<div class="a" style="left:999px;top:233px;width:1px;height:47px;background:#dedede;"></div>
<div class="a" style="left:901px;top:279px;width:99px;height:1px;background:#dedede;"></div>
<div class="a" style="left:1099px;top:233px;width:1px;height:47px;background:#dedede;"></div>
<div class="a" style="left:1001px;top:279px;width:99px;height:1px;background:#dedede;"></div>
<div class="a" style="left:1199px;top:233px;width:1px;height:47px;background:#dedede;"></div>
<div class="a" style="left:1101px;top:279px;width:99px;height:1px;background:#dedede;"></div>
<div class="a" style="left:1759px;top:233px;width:1px;height:47px;background:#dedede;"></div>
<div class="a" style="left:1201px;top:279px;width:559px;height:1px;background:#dedede;"></div>
<div class="a" style="left:1861px;top:233px;width:1px;height:47px;background:#dedede;"></div>
<div class="a" style="left:1762px;top:279px;width:100px;height:1px;background:#dedede;"></div>
<div class="a" style="left:239px;top:281px;width:1px;height:47px;background:#dedede;"></div>
<div class="a" style="left:191px;top:327px;width:48px;height:1px;background:#dedede;"></div>
<div class="a" style="left:339px;top:281px;width:1px;height:47px;background:#dedede;"></div>
<div class="a" style="left:241px;top:327px;width:99px;height:1px;background:#dedede;"></div>
<div class="a" style="left:499px;top:281px;width:1px;height:47px;background:#dedede;"></div>
<div class="a" style="left:341px;top:327px;width:159px;height:1px;background:#dedede;"></div>
<div class="a" style="left:599px;top:281px;width:1px;height:47px;background:#dedede;"></div>
<div class="a" style="left:501px;top:327px;width:99px;height:1px;background:#dedede;"></div>
<div class="a" style="left:699px;top:281px;width:1px;height:47px;background:#dedede;"></div>
<div class="a" style="left:601px;top:327px;width:99px;height:1px;background:#dedede;"></div>
<div class="a" style="left:799px;top:281px;width:1px;height:47px;background:#dedede;"></div>
<div class="a" style="left:701px;top:327px;width:99px;height:1px;background:#dedede;"></div>
<div class="a" style="left:899px;top:281px;width:1px;height:47px;background:#dedede;"></div>
<div class="a" style="left:801px;top:327px;width:99px;height:1px;background:#dedede;"></div>
<div class="a" style="left:999px;top:281px;width:1px;height:47px;background:#dedede;"></div>
<div class="a" style="left:901px;top:327px;width:99px;height:1px;background:#dedede;"></div>
<div class="a" style="left:1099px;top:281px;width:1px;height:47px;background:#dedede;"></div>
<div class="a" style="left:1001px;top:327px;width:99px;height:1px;background:#dedede;"></div>
<div class="a" style="left:1199px;top:281px;width:1px;height:47px;background:#dedede;"></div>
<div class="a" style="left:1101px;top:327px;width:99px;height:1px;background:#dedede;"></div>
<div class="a" style="left:1759px;top:281px;width:1px;height:47px;background:#dedede;"></div>
<div class="a" style="left:1201px;top:327px;width:559px;height:1px;background:#dedede;"></div>
<div class="a" style="left:1861px;top:281px;width:1px;height:47px;background:#dedede;"></div>
<div class="a" style="left:1762px;top:327px;width:100px;height:1px;background:#dedede;"></div>
<div class="a" style="left:239px;top:329px;width:1px;height:47px;background:#dedede;"></div>
<div class="a" style="left:191px;top:375px;width:48px;height:1px;background:#dedede;"></div>
<div class="a" style="left:339px;top:329px;width:1px;height:47px;background:#dedede;"></div>
<div class="a" style="left:241px;top:375px;width:99px;height:1px;background:#dedede;"></div>
<div class="a" style="left:499px;top:329px;width:1px;height:47px;background:#dedede;"></div>
<div class="a" style="left:341px;top:375px;width:159px;height:1px;background:#dedede;"></div>
<div class="a" style="left:599px;top:329px;width:1px;height:47px;background:#dedede;"></div>
<div class="a" style="left:501px;top:375px;width:99px;height:1px;background:#dedede;"></div>
<div class="a" style="left:699px;top:329px;width:1px;height:47px;background:#dedede;"></div>
<div class="a" style="left:601px;top:375px;width:99px;height:1px;background:#dedede;"></div>
<div class="a" style="left:799px;top:329px;width:1px;height:47px;background:#dedede;"></div>
<div class="a" style="left:701px;top:375px;width:99px;height:1px;background:#dedede;"></div>
<div class="a" style="left:899px;top:329px;width:1px;height:47px;background:#dedede;"></div>
<div class="a" style="left:801px;top:375px;width:99px;height:1px;background:#dedede;"></div>
<div class="a" style="left:999px;top:329px;width:1px;height:47px;background:#dedede;"></div>
<div class="a" style="left:901px;top:375px;width:99px;height:1px;background:#dedede;"></div>
<div class="a" style="left:1099px;top:329px;width:1px;height:47px;background:#dedede;"></div>
<div class="a" style="left:1001px;top:375px;width:99px;height:1px;background:#dedede;"></div>
<div class="a" style="left:1199px;top:329px;width:1px;height:47px;background:#dedede;"></div>
<div class="a" style="left:1101px;top:375px;width:99px;height:1px;background:#dedede;"></div>
<div class="a" style="left:1759px;top:329px;width:1px;height:47px;background:#dedede;"></div>
<div class="a" style="left:1201px;top:375px;width:559px;height:1px;background:#dedede;"></div>
<div class="a" style="left:1861px;top:329px;width:1px;height:47px;background:#dedede;"></div>
<div class="a" style="left:1762px;top:375px;width:100px;height:1px;background:#dedede;"></div>
<div class="a" style="left:239px;top:377px;width:1px;height:47px;background:#dedede;"></div>
<div class="a" style="left:191px;top:423px;width:48px;height:1px;background:#dedede;"></div>
<div class="a" style="left:339px;top:377px;width:1px;height:47px;background:#dedede;"></div>
<div class="a" style="left:241px;top:423px;width:99px;height:1px;background:#dedede;"></div>
<div class="a" style="left:499px;top:377px;width:1px;height:47px;background:#dedede;"></div>
<div class="a" style="left:341px;top:423px;width:159px;height:1px;background:#dedede;"></div>
<div class="a" style="left:599px;top:377px;width:1px;height:47px;background:#dedede;"></div>
<div class="a" style="left:501px;top:423px;width:99px;height:1px;background:#dedede;"></div>
<div class="a" style="left:699px;top:377px;width:1px;height:47px;background:#dedede;"></div>
<div class="a" style="left:601px;top:423px;width:99px;height:1px;background:#dedede;"></div>
<div class="a" style="left:799px;top:377px;width:1px;height:47px;background:#dedede;"></div>
<div class="a" style="left:701px;top:423px;width:99px;height:1px;background:#dedede;"></div>
<div class="a" style="left:899px;top:377px;width:1px;height:47px;background:#dedede;"></div>
<div class="a" style="left:801px;top:423px;width:99px;height:1px;background:#dedede;"></div>
<div class="a" style="left:999px;top:377px;width:1px;height:47px;background:#dedede;"></div>
<div class="a" style="left:901px;top:423px;width:99px;height:1px;background:#dedede;"></div>
<div class="a" style="left:1099px;top:377px;width:1px;height:47px;background:#dedede;"></div>
<div class="a" style="left:1001px;top:423px;width:99px;height:1px;background:#dedede;"></div>
<div class="a" style="left:1199px;top:377px;width:1px;height:47px;background:#dedede;"></div>
<div class="a" style="left:1101px;top:423px;width:99px;height:1px;background:#dedede;"></div>
<div class="a" style="left:1759px;top:377px;width:1px;height:47px;background:#dedede;"></div>
<div class="a" style="left:1201px;top:423px;width:559px;height:1px;background:#dedede;"></div>
<div class="a" style="left:1861px;top:377px;width:1px;height:47px;background:#dedede;"></div>
<div class="a" style="left:1762px;top:423px;width:100px;height:1px;background:#dedede;"></div>
<div class="a" style="left:239px;top:425px;width:1px;height:47px;background:#dedede;"></div>
<div class="a" style="left:191px;top:471px;width:48px;height:1px;background:#dedede;"></div>
<div class="a" style="left:339px;top:425px;width:1px;height:47px;background:#dedede;"></div>
<div class="a" style="left:241px;top:471px;width:99px;height:1px;background:#dedede;"></div>
<div class="a" style="left:499px;top:425px;width:1px;height:47px;background:#dedede;"></div>
<div class="a" style="left:341px;top:471px;width:159px;height:1px;background:#dedede;"></div>
<div class="a" style="left:599px;top:425px;width:1px;height:47px;background:#dedede;"></div>
<div class="a" style="left:501px;top:471px;width:99px;height:1px;background:#dedede;"></div>
<div class="a" style="left:699px;top:425px;width:1px;height:47px;background:#dedede;"></div>
<div class="a" style="left:601px;top:471px;width:99px;height:1px;background:#dedede;"></div>
<div class="a" style="left:799px;top:425px;width:1px;height:47px;background:#dedede;"></div>
<div class="a" style="left:701px;top:471px;width:99px;height:1px;background:#dedede;"></div>
<div class="a" style="left:899px;top:425px;width:1px;height:47px;background:#dedede;"></div>
<div class="a" style="left:801px;top:471px;width:99px;height:1px;background:#dedede;"></div>
<div class="a" style="left:999px;top:425px;width:1px;height:47px;background:#dedede;"></div>
<div class="a" style="left:901px;top:471px;width:99px;height:1px;background:#dedede;"></div>
<div class="a" style="left:1099px;top:425px;width:1px;height:47px;background:#dedede;"></div>
<div class="a" style="left:1001px;top:471px;width:99px;height:1px;background:#dedede;"></div>
<div class="a" style="left:1199px;top:425px;width:1px;height:47px;background:#dedede;"></div>
<div class="a" style="left:1101px;top:471px;width:99px;height:1px;background:#dedede;"></div>
<div class="a" style="left:1759px;top:425px;width:1px;height:47px;background:#dedede;"></div>
<div class="a" style="left:1201px;top:471px;width:559px;height:1px;background:#dedede;"></div>
<div class="a" style="left:1861px;top:425px;width:1px;height:47px;background:#dedede;"></div>
<div class="a" style="left:1762px;top:471px;width:100px;height:1px;background:#dedede;"></div>
<div class="a" style="left:239px;top:473px;width:1px;height:47px;background:#dedede;"></div>
<div class="a" style="left:191px;top:519px;width:48px;height:1px;background:#dedede;"></div>
<div class="a" style="left:339px;top:473px;width:1px;height:47px;background:#dedede;"></div>
<div class="a" style="left:241px;top:519px;width:99px;height:1px;background:#dedede;"></div>
<div class="a" style="left:499px;top:473px;width:1px;height:47px;background:#dedede;"></div>
<div class="a" style="left:341px;top:519px;width:159px;height:1px;background:#dedede;"></div>
<div class="a" style="left:599px;top:473px;width:1px;height:47px;background:#dedede;"></div>
<div class="a" style="left:501px;top:519px;width:99px;height:1px;background:#dedede;"></div>
<div class="a" style="left:699px;top:473px;width:1px;height:47px;background:#dedede;"></div>
<div class="a" style="left:601px;top:519px;width:99px;height:1px;background:#dedede;"></div>
<div class="a" style="left:799px;top:473px;width:1px;height:47px;background:#dedede;"></div>
<div class="a" style="left:701px;top:519px;width:99px;height:1px;background:#dedede;"></div>
<div class="a" style="left:899px;top:473px;width:1px;height:47px;background:#dedede;"></div>
<div class="a" style="left:801px;top:519px;width:99px;height:1px;background:#dedede;"></div>
<div class="a" style="left:999px;top:473px;width:1px;height:47px;background:#dedede;"></div>
<div class="a" style="left:901px;top:519px;width:99px;height:1px;background:#dedede;"></div>
<div class="a" style="left:1099px;top:473px;width:1px;height:47px;background:#dedede;"></div>
<div class="a" style="left:1001px;top:519px;width:99px;height:1px;background:#dedede;"></div>
<div class="a" style="left:1199px;top:473px;width:1px;height:47px;background:#dedede;"></div>
<div class="a" style="left:1101px;top:519px;width:99px;height:1px;background:#dedede;"></div>
<div class="a" style="left:1759px;top:473px;width:1px;height:47px;background:#dedede;"></div>
<div class="a" style="left:1201px;top:519px;width:559px;height:1px;background:#dedede;"></div>
<div class="a" style="left:1861px;top:473px;width:1px;height:47px;background:#dedede;"></div>
<div class="a" style="left:1762px;top:519px;width:100px;height:1px;background:#dedede;"></div>
<div class="a" style="left:239px;top:521px;width:1px;height:47px;background:#dedede;"></div>
<div class="a" style="left:191px;top:567px;width:48px;height:1px;background:#dedede;"></div>
<div class="a" style="left:339px;top:521px;width:1px;height:47px;background:#dedede;"></div>
<div class="a" style="left:241px;top:567px;width:99px;height:1px;background:#dedede;"></div>
<div class="a" style="left:499px;top:521px;width:1px;height:47px;background:#dedede;"></div>
<div class="a" style="left:341px;top:567px;width:159px;height:1px;background:#dedede;"></div>
<div class="a" style="left:599px;top:521px;width:1px;height:47px;background:#dedede;"></div>
<div class="a" style="left:501px;top:567px;width:99px;height:1px;background:#dedede;"></div>
<div class="a" style="left:699px;top:521px;width:1px;height:47px;background:#dedede;"></div>
<div class="a" style="left:601px;top:567px;width:99px;height:1px;background:#dedede;"></div>
<div class="a" style="left:799px;top:521px;width:1px;height:47px;background:#dedede;"></div>
<div class="a" style="left:701px;top:567px;width:99px;height:1px;background:#dedede;"></div>
<div class="a" style="left:899px;top:521px;width:1px;height:47px;background:#dedede;"></div>
<div class="a" style="left:801px;top:567px;width:99px;height:1px;background:#dedede;"></div>
<div class="a" style="left:999px;top:521px;width:1px;height:47px;background:#dedede;"></div>
<div class="a" style="left:901px;top:567px;width:99px;height:1px;background:#dedede;"></div>
<div class="a" style="left:1099px;top:521px;width:1px;height:47px;background:#dedede;"></div>
<div class="a" style="left:1001px;top:567px;width:99px;height:1px;background:#dedede;"></div>
<div class="a" style="left:1199px;top:521px;width:1px;height:47px;background:#dedede;"></div>
<div class="a" style="left:1101px;top:567px;width:99px;height:1px;background:#dedede;"></div>
<div class="a" style="left:1759px;top:521px;width:1px;height:47px;background:#dedede;"></div>
<div class="a" style="left:1201px;top:567px;width:559px;height:1px;background:#dedede;"></div>
<div class="a" style="left:1861px;top:521px;width:1px;height:47px;background:#dedede;"></div>
<div class="a" style="left:1762px;top:567px;width:100px;height:1px;background:#dedede;"></div>
<div class="a" style="left:239px;top:569px;width:1px;height:47px;background:#dedede;"></div>
<div class="a" style="left:191px;top:615px;width:48px;height:1px;background:#dedede;"></div>
<div class="a" style="left:339px;top:569px;width:1px;height:47px;background:#dedede;"></div>
<div class="a" style="left:241px;top:615px;width:99px;height:1px;background:#dedede;"></div>
<div class="a" style="left:499px;top:569px;width:1px;height:47px;background:#dedede;"></div>
<div class="a" style="left:341px;top:615px;width:159px;height:1px;background:#dedede;"></div>
<div class="a" style="left:599px;top:569px;width:1px;height:47px;background:#dedede;"></div>
<div class="a" style="left:501px;top:615px;width:99px;height:1px;background:#dedede;"></div>
<div class="a" style="left:699px;top:569px;width:1px;height:47px;background:#dedede;"></div>
<div class="a" style="left:601px;top:615px;width:99px;height:1px;background:#dedede;"></div>
<div class="a" style="left:799px;top:569px;width:1px;height:47px;background:#dedede;"></div>
<div class="a" style="left:701px;top:615px;width:99px;height:1px;background:#dedede;"></div>
<div class="a" style="left:899px;top:569px;width:1px;height:47px;background:#dedede;"></div>
<div class="a" style="left:801px;top:615px;width:99px;height:1px;background:#dedede;"></div>
<div class="a" style="left:999px;top:569px;width:1px;height:47px;background:#dedede;"></div>
<div class="a" style="left:901px;top:615px;width:99px;height:1px;background:#dedede;"></div>
<div class="a" style="left:1099px;top:569px;width:1px;height:47px;background:#dedede;"></div>
<div class="a" style="left:1001px;top:615px;width:99px;height:1px;background:#dedede;"></div>
<div class="a" style="left:1199px;top:569px;width:1px;height:47px;background:#dedede;"></div>
<div class="a" style="left:1101px;top:615px;width:99px;height:1px;background:#dedede;"></div>
<div class="a" style="left:1759px;top:569px;width:1px;height:47px;background:#dedede;"></div>
<div class="a" style="left:1201px;top:615px;width:559px;height:1px;background:#dedede;"></div>
<div class="a" style="left:1861px;top:569px;width:1px;height:47px;background:#dedede;"></div>
<div class="a" style="left:1762px;top:615px;width:100px;height:1px;background:#dedede;"></div>
<div class="a" style="left:239px;top:617px;width:1px;height:47px;background:#dedede;"></div>
<div class="a" style="left:191px;top:663px;width:48px;height:1px;background:#dedede;"></div>
<div class="a" style="left:339px;top:617px;width:1px;height:47px;background:#dedede;"></div>
<div class="a" style="left:241px;top:663px;width:99px;height:1px;background:#dedede;"></div>
<div class="a" style="left:499px;top:617px;width:1px;height:47px;background:#dedede;"></div>
<div class="a" style="left:341px;top:663px;width:159px;height:1px;background:#dedede;"></div>
<div class="a" style="left:599px;top:617px;width:1px;height:47px;background:#dedede;"></div>
<div class="a" style="left:501px;top:663px;width:99px;height:1px;background:#dedede;"></div>
<div class="a" style="left:699px;top:617px;width:1px;height:47px;background:#dedede;"></div>
<div class="a" style="left:601px;top:663px;width:99px;height:1px;background:#dedede;"></div>
<div class="a" style="left:799px;top:617px;width:1px;height:47px;background:#dedede;"></div>
<div class="a" style="left:701px;top:663px;width:99px;height:1px;background:#dedede;"></div>
<div class="a" style="left:899px;top:617px;width:1px;height:47px;background:#dedede;"></div>
<div class="a" style="left:801px;top:663px;width:99px;height:1px;background:#dedede;"></div>
<div class="a" style="left:999px;top:617px;width:1px;height:47px;background:#dedede;"></div>
<div class="a" style="left:901px;top:663px;width:99px;height:1px;background:#dedede;"></div>
<div class="a" style="left:1099px;top:617px;width:1px;height:47px;background:#dedede;"></div>
<div class="a" style="left:1001px;top:663px;width:99px;height:1px;background:#dedede;"></div>
<div class="a" style="left:1199px;top:617px;width:1px;height:47px;background:#dedede;"></div>
<div class="a" style="left:1101px;top:663px;width:99px;height:1px;background:#dedede;"></div>
<div class="a" style="left:1759px;top:617px;width:1px;height:47px;background:#dedede;"></div>
<div class="a" style="left:1201px;top:663px;width:559px;height:1px;background:#dedede;"></div>
<div class="a" style="left:1861px;top:617px;width:1px;height:47px;background:#dedede;"></div>
<div class="a" style="left:1762px;top:663px;width:100px;height:1px;background:#dedede;"></div>
<div class="a" style="left:239px;top:665px;width:1px;height:47px;background:#dedede;"></div>
<div class="a" style="left:191px;top:711px;width:48px;height:1px;background:#dedede;"></div>
<div class="a" style="left:339px;top:665px;width:1px;height:47px;background:#dedede;"></div>
<div class="a" style="left:241px;top:711px;width:99px;height:1px;background:#dedede;"></div>
<div class="a" style="left:499px;top:665px;width:1px;height:47px;background:#dedede;"></div>
<div class="a" style="left:341px;top:711px;width:159px;height:1px;background:#dedede;"></div>
<div class="a" style="left:599px;top:665px;width:1px;height:47px;background:#dedede;"></div>
<div class="a" style="left:501px;top:711px;width:99px;height:1px;background:#dedede;"></div>
<div class="a" style="left:699px;top:665px;width:1px;height:47px;background:#dedede;"></div>
<div class="a" style="left:601px;top:711px;width:99px;height:1px;background:#dedede;"></div>
<div class="a" style="left:799px;top:665px;width:1px;height:47px;background:#dedede;"></div>
<div class="a" style="left:701px;top:711px;width:99px;height:1px;background:#dedede;"></div>
<div class="a" style="left:899px;top:665px;width:1px;height:47px;background:#dedede;"></div>
<div class="a" style="left:801px;top:711px;width:99px;height:1px;background:#dedede;"></div>
<div class="a" style="left:999px;top:665px;width:1px;height:47px;background:#dedede;"></div>
<div class="a" style="left:901px;top:711px;width:99px;height:1px;background:#dedede;"></div>
<div class="a" style="left:1099px;top:665px;width:1px;height:47px;background:#dedede;"></div>
<div class="a" style="left:1001px;top:711px;width:99px;height:1px;background:#dedede;"></div>
<div class="a" style="left:1199px;top:665px;width:1px;height:47px;background:#dedede;"></div>
<div class="a" style="left:1101px;top:711px;width:99px;height:1px;background:#dedede;"></div>
<div class="a" style="left:1759px;top:665px;width:1px;height:47px;background:#dedede;"></div>
<div class="a" style="left:1201px;top:711px;width:559px;height:1px;background:#dedede;"></div>
<div class="a" style="left:1861px;top:665px;width:1px;height:47px;background:#dedede;"></div>
<div class="a" style="left:1762px;top:711px;width:100px;height:1px;background:#dedede;"></div>
<div class="a" style="left:239px;top:713px;width:1px;height:47px;background:#dedede;"></div>
<div class="a" style="left:191px;top:759px;width:48px;height:1px;background:#dedede;"></div>
<div class="a" style="left:339px;top:713px;width:1px;height:47px;background:#dedede;"></div>
<div class="a" style="left:241px;top:759px;width:99px;height:1px;background:#dedede;"></div>
<div class="a" style="left:499px;top:713px;width:1px;height:47px;background:#dedede;"></div>
<div class="a" style="left:341px;top:759px;width:159px;height:1px;background:#dedede;"></div>
<div class="a" style="left:599px;top:713px;width:1px;height:47px;background:#dedede;"></div>
<div class="a" style="left:501px;top:759px;width:99px;height:1px;background:#dedede;"></div>
<div class="a" style="left:699px;top:713px;width:1px;height:47px;background:#dedede;"></div>
<div class="a" style="left:601px;top:759px;width:99px;height:1px;background:#dedede;"></div>
<div class="a" style="left:799px;top:713px;width:1px;height:47px;background:#dedede;"></div>
<div class="a" style="left:701px;top:759px;width:99px;height:1px;background:#dedede;"></div>
<div class="a" style="left:899px;top:713px;width:1px;height:47px;background:#dedede;"></div>
<div class="a" style="left:801px;top:759px;width:99px;height:1px;background:#dedede;"></div>
<div class="a" style="left:999px;top:713px;width:1px;height:47px;background:#dedede;"></div>
<div class="a" style="left:901px;top:759px;width:99px;height:1px;background:#dedede;"></div>
<div class="a" style="left:1099px;top:713px;width:1px;height:47px;background:#dedede;"></div>
<div class="a" style="left:1001px;top:759px;width:99px;height:1px;background:#dedede;"></div>
<div class="a" style="left:1199px;top:713px;width:1px;height:47px;background:#dedede;"></div>
<div class="a" style="left:1101px;top:759px;width:99px;height:1px;background:#dedede;"></div>
<div class="a" style="left:1759px;top:713px;width:1px;height:47px;background:#dedede;"></div>
<div class="a" style="left:1201px;top:759px;width:559px;height:1px;background:#dedede;"></div>
<div class="a" style="left:1861px;top:713px;width:1px;height:47px;background:#dedede;"></div>
<div class="a" style="left:1762px;top:759px;width:100px;height:1px;background:#dedede;"></div>
<div class="a" style="left:239px;top:761px;width:1px;height:6px;background:#dedede;"></div>
<div class="a" style="left:339px;top:761px;width:1px;height:6px;background:#dedede;"></div>
<div class="a" style="left:499px;top:761px;width:1px;height:6px;background:#dedede;"></div>
<div class="a" style="left:599px;top:761px;width:1px;height:6px;background:#dedede;"></div>
<div class="a" style="left:699px;top:761px;width:1px;height:6px;background:#dedede;"></div>
<div class="a" style="left:799px;top:761px;width:1px;height:6px;background:#dedede;"></div>
<div class="a" style="left:899px;top:761px;width:1px;height:6px;background:#dedede;"></div>
<div class="a" style="left:999px;top:761px;width:1px;height:6px;background:#dedede;"></div>
<div class="a" style="left:1099px;top:761px;width:1px;height:6px;background:#dedede;"></div>
<div class="a" style="left:1199px;top:761px;width:1px;height:6px;background:#dedede;"></div>
<div class="a" style="left:1759px;top:761px;width:1px;height:6px;background:#dedede;"></div>
<div class="a" style="left:1861px;top:761px;width:1px;height:6px;background:#dedede;"></div>
<div class="a" style="left:190px;top:767px;width:1569px;height:47px;background:#fdf0db;"></div>
<div class="a" style="left:1762px;top:767px;width:99px;height:47px;background:#fdf0db;"></div>
<div class="a" style="left:239px;top:767px;width:1px;height:48px;background:#dedede;"></div>
<div class="a" style="left:339px;top:767px;width:1px;height:48px;background:#dedede;"></div>
<div class="a" style="left:499px;top:767px;width:1px;height:48px;background:#dedede;"></div>
<div class="a" style="left:599px;top:767px;width:1px;height:48px;background:#dedede;"></div>
<div class="a" style="left:699px;top:767px;width:1px;height:48px;background:#dedede;"></div>
<div class="a" style="left:799px;top:767px;width:1px;height:48px;background:#dedede;"></div>
<div class="a" style="left:899px;top:767px;width:1px;height:48px;background:#dedede;"></div>
<div class="a" style="left:999px;top:767px;width:1px;height:48px;background:#dedede;"></div>
<div class="a" style="left:1099px;top:767px;width:1px;height:48px;background:#dedede;"></div>
<div class="a" style="left:1199px;top:767px;width:1px;height:48px;background:#dedede;"></div>
<div class="a" style="left:1759px;top:767px;width:1px;height:48px;background:#dedede;"></div>
<div class="a" style="left:1861px;top:767px;width:1px;height:48px;background:#dedede;"></div>
<div class="a" style="left:191px;top:814px;width:48px;height:1px;background:#dedede;"></div>
<div class="a" style="left:241px;top:814px;width:99px;height:1px;background:#dedede;"></div>
<div class="a" style="left:341px;top:814px;width:159px;height:1px;background:#dedede;"></div>
<div class="a" style="left:501px;top:814px;width:99px;height:1px;background:#dedede;"></div>
<div class="a" style="left:601px;top:814px;width:99px;height:1px;background:#dedede;"></div>
<div class="a" style="left:701px;top:814px;width:99px;height:1px;background:#dedede;"></div>
<div class="a" style="left:801px;top:814px;width:99px;height:1px;background:#dedede;"></div>
<div class="a" style="left:901px;top:814px;width:99px;height:1px;background:#dedede;"></div>
<div class="a" style="left:1001px;top:814px;width:99px;height:1px;background:#dedede;"></div>
<div class="a" style="left:1101px;top:814px;width:99px;height:1px;background:#dedede;"></div>
<div class="a" style="left:1201px;top:814px;width:559px;height:1px;background:#dedede;"></div>
<div class="a" style="left:1762px;top:814px;width:100px;height:1px;background:#dedede;"></div>
<div class="t" style="left:203px;top:785px;font-size:14px;color:#333;font-weight:normal;">小计</div>
<div class="t" style="left:727px;width:60px;text-align:right;top:784px;font-size:15px;font-weight:bold;color:#222">0.00</div>
<div class="t" style="left:927px;width:60px;text-align:right;top:784px;font-size:15px;font-weight:bold;color:#222">0.00</div>
<div class="t" style="left:1127px;width:60px;text-align:right;top:784px;font-size:15px;font-weight:bold;color:#222">0.00</div>
<div class="t" style="left:1687px;width:60px;text-align:right;top:784px;font-size:15px;font-weight:bold;color:#222">0.00</div>
<svg style="left:207px;top:208px" width="15" height="15" viewBox="0 0 15 15"><path d="M14.10 7.50 L14.08 7.84 L14.01 8.18 L13.88 8.51 L13.69 8.82 L13.10 9.00 L12.51 9.13 L12.29 9.34 L12.12 9.56 L11.97 9.78 L11.83 10.00 L11.71 10.23 L11.59 10.47 L11.49 10.73 L11.42 11.03 L11.60 11.60 L11.74 12.20 L11.57 12.52 L11.35 12.79 L11.09 13.02 L10.80 13.22 L10.49 13.37 L10.16 13.48 L9.82 13.53 L9.46 13.52 L9.00 13.10 L8.60 12.65 L8.30 12.57 L8.03 12.53 L7.76 12.51 L7.50 12.50 L7.24 12.51 L6.97 12.53 L6.70 12.57 L6.40 12.65 L6.00 13.10 L5.54 13.52 L5.18 13.53 L4.84 13.48 L4.51 13.37 L4.20 13.22 L3.91 13.02 L3.65 12.79 L3.43 12.52 L3.26 12.20 L3.40 11.60 L3.58 11.03 L3.51 10.73 L3.41 10.47 L3.29 10.23 L3.17 10.00 L3.03 9.78 L2.88 9.56 L2.71 9.34 L2.49 9.13 L1.90 9.00 L1.31 8.82 L1.12 8.51 L0.99 8.18 L0.92 7.84 L0.90 7.50 L0.92 7.16 L0.99 6.82 L1.12 6.49 L1.31 6.18 L1.90 6.00 L2.49 5.87 L2.71 5.66 L2.88 5.44 L3.03 5.22 L3.17 5.00 L3.29 4.77 L3.41 4.53 L3.51 4.27 L3.58 3.97 L3.40 3.40 L3.26 2.80 L3.43 2.48 L3.65 2.21 L3.91 1.98 L4.20 1.78 L4.51 1.63 L4.84 1.52 L5.18 1.47 L5.54 1.48 L6.00 1.90 L6.40 2.35 L6.70 2.43 L6.97 2.47 L7.24 2.49 L7.50 2.50 L7.76 2.49 L8.03 2.47 L8.30 2.43 L8.60 2.35 L9.00 1.90 L9.46 1.48 L9.82 1.47 L10.16 1.52 L10.49 1.63 L10.80 1.78 L11.09 1.98 L11.35 2.21 L11.57 2.48 L11.74 2.80 L11.60 3.40 L11.42 3.97 L11.49 4.27 L11.59 4.53 L11.71 4.77 L11.83 5.00 L11.97 5.22 L12.12 5.44 L12.29 5.66 L12.51 5.87 L13.10 6.00 L13.69 6.18 L13.88 6.49 L14.01 6.82 L14.08 7.16 L14.10 7.50Z" stroke="#444" stroke-width="1.1" fill="none"/><circle cx="7.5" cy="7.5" r="2.2" stroke="#444" stroke-width="1.1" fill="none"/></svg>
<svg style="left:252px;top:211px" width="8" height="13" viewBox="0 0 8 13"><path d="M0 4.7 L4 0 L8 4.7Z M0 8 L4 12.7 L8 8Z" fill="#c0c0c0"/></svg>
<div class="t" style="left:266px;top:210px;font-size:14px;color:#222;font-weight:bold;">仓库</div>
<svg style="left:352px;top:211px" width="8" height="13" viewBox="0 0 8 13"><path d="M0 4.7 L4 0 L8 4.7Z M0 8 L4 12.7 L8 8Z" fill="#c0c0c0"/></svg>
<div class="t" style="left:366px;top:211px;font-size:14px;color:#f02020;font-weight:bold;">*</div>
<div class="t" style="left:375px;top:210px;font-size:14px;color:#222;font-weight:bold;">商品</div>
<svg style="left:512px;top:211px" width="8" height="13" viewBox="0 0 8 13"><path d="M0 4.7 L4 0 L8 4.7Z M0 8 L4 12.7 L8 8Z" fill="#c0c0c0"/></svg>
<div class="t" style="left:525px;top:210px;font-size:14px;color:#222;font-weight:bold;">规格型号</div>
<svg style="left:612px;top:211px" width="8" height="13" viewBox="0 0 8 13"><path d="M0 4.7 L4 0 L8 4.7Z M0 8 L4 12.7 L8 8Z" fill="#c0c0c0"/></svg>
<div class="t" style="left:626px;top:211px;font-size:14px;color:#f02020;font-weight:bold;">*</div>
<div class="t" style="left:635px;top:210px;font-size:14px;color:#222;font-weight:bold;">主计量</div>
<svg style="left:712px;top:211px" width="8" height="13" viewBox="0 0 8 13"><path d="M0 4.7 L4 0 L8 4.7Z M0 8 L4 12.7 L8 8Z" fill="#c0c0c0"/></svg>
<div class="t" style="left:729px;top:210px;font-size:14px;color:#222;font-weight:bold;">调整数量</div>
<svg style="left:812px;top:211px" width="8" height="13" viewBox="0 0 8 13"><path d="M0 4.7 L4 0 L8 4.7Z M0 8 L4 12.7 L8 8Z" fill="#c0c0c0"/></svg>
<div class="t" style="left:830px;top:210px;font-size:14px;color:#222;font-weight:bold;">调前单价</div>
<svg style="left:912px;top:211px" width="8" height="13" viewBox="0 0 8 13"><path d="M0 4.7 L4 0 L8 4.7Z M0 8 L4 12.7 L8 8Z" fill="#c0c0c0"/></svg>
<div class="t" style="left:930px;top:210px;font-size:14px;color:#222;font-weight:bold;">调前金额</div>
<svg style="left:1012px;top:211px" width="8" height="13" viewBox="0 0 8 13"><path d="M0 4.7 L4 0 L8 4.7Z M0 8 L4 12.7 L8 8Z" fill="#c0c0c0"/></svg>
<div class="t" style="left:1030px;top:210px;font-size:14px;color:#222;font-weight:bold;">调后单价</div>
<svg style="left:1112px;top:211px" width="8" height="13" viewBox="0 0 8 13"><path d="M0 4.7 L4 0 L8 4.7Z M0 8 L4 12.7 L8 8Z" fill="#c0c0c0"/></svg>
<div class="t" style="left:1130px;top:210px;font-size:14px;color:#222;font-weight:bold;">调后金额</div>
<svg style="left:1212px;top:211px" width="8" height="13" viewBox="0 0 8 13"><path d="M0 4.7 L4 0 L8 4.7Z M0 8 L4 12.7 L8 8Z" fill="#c0c0c0"/></svg>
<div class="t" style="left:1681px;top:211px;font-size:14px;color:#f02020;font-weight:bold;">*</div>
<div class="t" style="left:1690px;top:210px;font-size:14px;color:#222;font-weight:bold;">调整金额</div>
<div class="t" style="left:1798px;top:210px;font-size:14px;color:#222;font-weight:bold;">操作</div>
<div class="a" style="left:433px;top:208px;width:62px;height:18px;background:#ff8a40;border-radius:4px"></div>
<div class="t" style="left:436px;top:210px;font-size:14px;color:#fff;font-weight:normal;">扫码录入</div>
<div class="t" style="left:189px;width:50px;text-align:center;top:248.5px;padding-left:2px;font-size:15px;color:#333">1</div>
<svg style="left:1793px;top:244px" width="11" height="13" viewBox="0 0 11 13"><path d="M0.3 3.2 H10.7" stroke="#444" stroke-width="1.1"/><path d="M3.8 3 V1.6 Q3.8 0.6 4.8 0.6 H6.2 Q7.2 0.6 7.2 1.6 V3" stroke="#444" stroke-width="1" fill="none"/><path d="M1.3 3.6 L1.6 10.8 Q1.7 12.4 3.3 12.4 H7.7 Q9.3 12.4 9.4 10.8 L9.7 3.6" stroke="#666" stroke-width="1.2" fill="none"/><path d="M4.2 6 V9.8 M6.8 6 V9.8" stroke="#555" stroke-width="0.9"/></svg>
<svg style="left:1820px;top:244px" width="13" height="13" viewBox="0 0 13 13"><path d="M2.5 9.6 H1.7 Q0.6 9.6 0.6 8.5 V1.7 Q0.6 0.6 1.7 0.6 H8.5 Q9.6 0.6 9.6 1.7 V2.5" stroke="#888" stroke-width="1" fill="none"/><rect x="2.7" y="2.7" width="9.6" height="9.6" rx="1.2" stroke="#555" stroke-width="1.1" fill="#fff"/><path d="M5.2 7.5 H9.8 M7.5 5.6 V9.4" stroke="#333" stroke-width="1"/></svg>
<div class="t" style="left:189px;width:50px;text-align:center;top:296.5px;padding-left:2px;font-size:15px;color:#333">2</div>
<svg style="left:1793px;top:292px" width="11" height="13" viewBox="0 0 11 13"><path d="M0.3 3.2 H10.7" stroke="#444" stroke-width="1.1"/><path d="M3.8 3 V1.6 Q3.8 0.6 4.8 0.6 H6.2 Q7.2 0.6 7.2 1.6 V3" stroke="#444" stroke-width="1" fill="none"/><path d="M1.3 3.6 L1.6 10.8 Q1.7 12.4 3.3 12.4 H7.7 Q9.3 12.4 9.4 10.8 L9.7 3.6" stroke="#666" stroke-width="1.2" fill="none"/><path d="M4.2 6 V9.8 M6.8 6 V9.8" stroke="#555" stroke-width="0.9"/></svg>
<svg style="left:1820px;top:292px" width="13" height="13" viewBox="0 0 13 13"><path d="M2.5 9.6 H1.7 Q0.6 9.6 0.6 8.5 V1.7 Q0.6 0.6 1.7 0.6 H8.5 Q9.6 0.6 9.6 1.7 V2.5" stroke="#888" stroke-width="1" fill="none"/><rect x="2.7" y="2.7" width="9.6" height="9.6" rx="1.2" stroke="#555" stroke-width="1.1" fill="#fff"/><path d="M5.2 7.5 H9.8 M7.5 5.6 V9.4" stroke="#333" stroke-width="1"/></svg>
<div class="t" style="left:189px;width:50px;text-align:center;top:344.5px;padding-left:2px;font-size:15px;color:#333">3</div>
<svg style="left:1793px;top:340px" width="11" height="13" viewBox="0 0 11 13"><path d="M0.3 3.2 H10.7" stroke="#444" stroke-width="1.1"/><path d="M3.8 3 V1.6 Q3.8 0.6 4.8 0.6 H6.2 Q7.2 0.6 7.2 1.6 V3" stroke="#444" stroke-width="1" fill="none"/><path d="M1.3 3.6 L1.6 10.8 Q1.7 12.4 3.3 12.4 H7.7 Q9.3 12.4 9.4 10.8 L9.7 3.6" stroke="#666" stroke-width="1.2" fill="none"/><path d="M4.2 6 V9.8 M6.8 6 V9.8" stroke="#555" stroke-width="0.9"/></svg>
<svg style="left:1820px;top:340px" width="13" height="13" viewBox="0 0 13 13"><path d="M2.5 9.6 H1.7 Q0.6 9.6 0.6 8.5 V1.7 Q0.6 0.6 1.7 0.6 H8.5 Q9.6 0.6 9.6 1.7 V2.5" stroke="#888" stroke-width="1" fill="none"/><rect x="2.7" y="2.7" width="9.6" height="9.6" rx="1.2" stroke="#555" stroke-width="1.1" fill="#fff"/><path d="M5.2 7.5 H9.8 M7.5 5.6 V9.4" stroke="#333" stroke-width="1"/></svg>
<div class="t" style="left:189px;width:50px;text-align:center;top:392.5px;padding-left:2px;font-size:15px;color:#333">4</div>
<svg style="left:1793px;top:388px" width="11" height="13" viewBox="0 0 11 13"><path d="M0.3 3.2 H10.7" stroke="#444" stroke-width="1.1"/><path d="M3.8 3 V1.6 Q3.8 0.6 4.8 0.6 H6.2 Q7.2 0.6 7.2 1.6 V3" stroke="#444" stroke-width="1" fill="none"/><path d="M1.3 3.6 L1.6 10.8 Q1.7 12.4 3.3 12.4 H7.7 Q9.3 12.4 9.4 10.8 L9.7 3.6" stroke="#666" stroke-width="1.2" fill="none"/><path d="M4.2 6 V9.8 M6.8 6 V9.8" stroke="#555" stroke-width="0.9"/></svg>
<svg style="left:1820px;top:388px" width="13" height="13" viewBox="0 0 13 13"><path d="M2.5 9.6 H1.7 Q0.6 9.6 0.6 8.5 V1.7 Q0.6 0.6 1.7 0.6 H8.5 Q9.6 0.6 9.6 1.7 V2.5" stroke="#888" stroke-width="1" fill="none"/><rect x="2.7" y="2.7" width="9.6" height="9.6" rx="1.2" stroke="#555" stroke-width="1.1" fill="#fff"/><path d="M5.2 7.5 H9.8 M7.5 5.6 V9.4" stroke="#333" stroke-width="1"/></svg>
<div class="t" style="left:189px;width:50px;text-align:center;top:440.5px;padding-left:2px;font-size:15px;color:#333">5</div>
<svg style="left:1793px;top:436px" width="11" height="13" viewBox="0 0 11 13"><path d="M0.3 3.2 H10.7" stroke="#444" stroke-width="1.1"/><path d="M3.8 3 V1.6 Q3.8 0.6 4.8 0.6 H6.2 Q7.2 0.6 7.2 1.6 V3" stroke="#444" stroke-width="1" fill="none"/><path d="M1.3 3.6 L1.6 10.8 Q1.7 12.4 3.3 12.4 H7.7 Q9.3 12.4 9.4 10.8 L9.7 3.6" stroke="#666" stroke-width="1.2" fill="none"/><path d="M4.2 6 V9.8 M6.8 6 V9.8" stroke="#555" stroke-width="0.9"/></svg>
<svg style="left:1820px;top:436px" width="13" height="13" viewBox="0 0 13 13"><path d="M2.5 9.6 H1.7 Q0.6 9.6 0.6 8.5 V1.7 Q0.6 0.6 1.7 0.6 H8.5 Q9.6 0.6 9.6 1.7 V2.5" stroke="#888" stroke-width="1" fill="none"/><rect x="2.7" y="2.7" width="9.6" height="9.6" rx="1.2" stroke="#555" stroke-width="1.1" fill="#fff"/><path d="M5.2 7.5 H9.8 M7.5 5.6 V9.4" stroke="#333" stroke-width="1"/></svg>
<div class="t" style="left:189px;width:50px;text-align:center;top:488.5px;padding-left:2px;font-size:15px;color:#333">6</div>
<svg style="left:1793px;top:484px" width="11" height="13" viewBox="0 0 11 13"><path d="M0.3 3.2 H10.7" stroke="#444" stroke-width="1.1"/><path d="M3.8 3 V1.6 Q3.8 0.6 4.8 0.6 H6.2 Q7.2 0.6 7.2 1.6 V3" stroke="#444" stroke-width="1" fill="none"/><path d="M1.3 3.6 L1.6 10.8 Q1.7 12.4 3.3 12.4 H7.7 Q9.3 12.4 9.4 10.8 L9.7 3.6" stroke="#666" stroke-width="1.2" fill="none"/><path d="M4.2 6 V9.8 M6.8 6 V9.8" stroke="#555" stroke-width="0.9"/></svg>
<svg style="left:1820px;top:484px" width="13" height="13" viewBox="0 0 13 13"><path d="M2.5 9.6 H1.7 Q0.6 9.6 0.6 8.5 V1.7 Q0.6 0.6 1.7 0.6 H8.5 Q9.6 0.6 9.6 1.7 V2.5" stroke="#888" stroke-width="1" fill="none"/><rect x="2.7" y="2.7" width="9.6" height="9.6" rx="1.2" stroke="#555" stroke-width="1.1" fill="#fff"/><path d="M5.2 7.5 H9.8 M7.5 5.6 V9.4" stroke="#333" stroke-width="1"/></svg>
<div class="t" style="left:189px;width:50px;text-align:center;top:536.5px;padding-left:2px;font-size:15px;color:#333">7</div>
<svg style="left:1793px;top:532px" width="11" height="13" viewBox="0 0 11 13"><path d="M0.3 3.2 H10.7" stroke="#444" stroke-width="1.1"/><path d="M3.8 3 V1.6 Q3.8 0.6 4.8 0.6 H6.2 Q7.2 0.6 7.2 1.6 V3" stroke="#444" stroke-width="1" fill="none"/><path d="M1.3 3.6 L1.6 10.8 Q1.7 12.4 3.3 12.4 H7.7 Q9.3 12.4 9.4 10.8 L9.7 3.6" stroke="#666" stroke-width="1.2" fill="none"/><path d="M4.2 6 V9.8 M6.8 6 V9.8" stroke="#555" stroke-width="0.9"/></svg>
<svg style="left:1820px;top:532px" width="13" height="13" viewBox="0 0 13 13"><path d="M2.5 9.6 H1.7 Q0.6 9.6 0.6 8.5 V1.7 Q0.6 0.6 1.7 0.6 H8.5 Q9.6 0.6 9.6 1.7 V2.5" stroke="#888" stroke-width="1" fill="none"/><rect x="2.7" y="2.7" width="9.6" height="9.6" rx="1.2" stroke="#555" stroke-width="1.1" fill="#fff"/><path d="M5.2 7.5 H9.8 M7.5 5.6 V9.4" stroke="#333" stroke-width="1"/></svg>
<div class="t" style="left:189px;width:50px;text-align:center;top:584.5px;padding-left:2px;font-size:15px;color:#333">8</div>
<svg style="left:1793px;top:580px" width="11" height="13" viewBox="0 0 11 13"><path d="M0.3 3.2 H10.7" stroke="#444" stroke-width="1.1"/><path d="M3.8 3 V1.6 Q3.8 0.6 4.8 0.6 H6.2 Q7.2 0.6 7.2 1.6 V3" stroke="#444" stroke-width="1" fill="none"/><path d="M1.3 3.6 L1.6 10.8 Q1.7 12.4 3.3 12.4 H7.7 Q9.3 12.4 9.4 10.8 L9.7 3.6" stroke="#666" stroke-width="1.2" fill="none"/><path d="M4.2 6 V9.8 M6.8 6 V9.8" stroke="#555" stroke-width="0.9"/></svg>
<svg style="left:1820px;top:580px" width="13" height="13" viewBox="0 0 13 13"><path d="M2.5 9.6 H1.7 Q0.6 9.6 0.6 8.5 V1.7 Q0.6 0.6 1.7 0.6 H8.5 Q9.6 0.6 9.6 1.7 V2.5" stroke="#888" stroke-width="1" fill="none"/><rect x="2.7" y="2.7" width="9.6" height="9.6" rx="1.2" stroke="#555" stroke-width="1.1" fill="#fff"/><path d="M5.2 7.5 H9.8 M7.5 5.6 V9.4" stroke="#333" stroke-width="1"/></svg>
<div class="t" style="left:189px;width:50px;text-align:center;top:632.5px;padding-left:2px;font-size:15px;color:#333">9</div>
<svg style="left:1793px;top:628px" width="11" height="13" viewBox="0 0 11 13"><path d="M0.3 3.2 H10.7" stroke="#444" stroke-width="1.1"/><path d="M3.8 3 V1.6 Q3.8 0.6 4.8 0.6 H6.2 Q7.2 0.6 7.2 1.6 V3" stroke="#444" stroke-width="1" fill="none"/><path d="M1.3 3.6 L1.6 10.8 Q1.7 12.4 3.3 12.4 H7.7 Q9.3 12.4 9.4 10.8 L9.7 3.6" stroke="#666" stroke-width="1.2" fill="none"/><path d="M4.2 6 V9.8 M6.8 6 V9.8" stroke="#555" stroke-width="0.9"/></svg>
<svg style="left:1820px;top:628px" width="13" height="13" viewBox="0 0 13 13"><path d="M2.5 9.6 H1.7 Q0.6 9.6 0.6 8.5 V1.7 Q0.6 0.6 1.7 0.6 H8.5 Q9.6 0.6 9.6 1.7 V2.5" stroke="#888" stroke-width="1" fill="none"/><rect x="2.7" y="2.7" width="9.6" height="9.6" rx="1.2" stroke="#555" stroke-width="1.1" fill="#fff"/><path d="M5.2 7.5 H9.8 M7.5 5.6 V9.4" stroke="#333" stroke-width="1"/></svg>
<div class="t" style="left:189px;width:50px;text-align:center;top:680.5px;padding-left:2px;font-size:15px;color:#333">10</div>
<svg style="left:1793px;top:676px" width="11" height="13" viewBox="0 0 11 13"><path d="M0.3 3.2 H10.7" stroke="#444" stroke-width="1.1"/><path d="M3.8 3 V1.6 Q3.8 0.6 4.8 0.6 H6.2 Q7.2 0.6 7.2 1.6 V3" stroke="#444" stroke-width="1" fill="none"/><path d="M1.3 3.6 L1.6 10.8 Q1.7 12.4 3.3 12.4 H7.7 Q9.3 12.4 9.4 10.8 L9.7 3.6" stroke="#666" stroke-width="1.2" fill="none"/><path d="M4.2 6 V9.8 M6.8 6 V9.8" stroke="#555" stroke-width="0.9"/></svg>
<svg style="left:1820px;top:676px" width="13" height="13" viewBox="0 0 13 13"><path d="M2.5 9.6 H1.7 Q0.6 9.6 0.6 8.5 V1.7 Q0.6 0.6 1.7 0.6 H8.5 Q9.6 0.6 9.6 1.7 V2.5" stroke="#888" stroke-width="1" fill="none"/><rect x="2.7" y="2.7" width="9.6" height="9.6" rx="1.2" stroke="#555" stroke-width="1.1" fill="#fff"/><path d="M5.2 7.5 H9.8 M7.5 5.6 V9.4" stroke="#333" stroke-width="1"/></svg>
<div class="t" style="left:189px;width:50px;text-align:center;top:728.5px;padding-left:2px;font-size:15px;color:#333">11</div>
<svg style="left:1793px;top:724px" width="11" height="13" viewBox="0 0 11 13"><path d="M0.3 3.2 H10.7" stroke="#444" stroke-width="1.1"/><path d="M3.8 3 V1.6 Q3.8 0.6 4.8 0.6 H6.2 Q7.2 0.6 7.2 1.6 V3" stroke="#444" stroke-width="1" fill="none"/><path d="M1.3 3.6 L1.6 10.8 Q1.7 12.4 3.3 12.4 H7.7 Q9.3 12.4 9.4 10.8 L9.7 3.6" stroke="#666" stroke-width="1.2" fill="none"/><path d="M4.2 6 V9.8 M6.8 6 V9.8" stroke="#555" stroke-width="0.9"/></svg>
<svg style="left:1820px;top:724px" width="13" height="13" viewBox="0 0 13 13"><path d="M2.5 9.6 H1.7 Q0.6 9.6 0.6 8.5 V1.7 Q0.6 0.6 1.7 0.6 H8.5 Q9.6 0.6 9.6 1.7 V2.5" stroke="#888" stroke-width="1" fill="none"/><rect x="2.7" y="2.7" width="9.6" height="9.6" rx="1.2" stroke="#555" stroke-width="1.1" fill="#fff"/><path d="M5.2 7.5 H9.8 M7.5 5.6 V9.4" stroke="#333" stroke-width="1"/></svg>
<div class="a" style="left:1853px;top:234px;width:9px;height:296px;background:#b3b3b3;border-radius:4.5px 4.5px 0 0"></div>
<div class="a" style="left:169px;top:835px;width:1713px;height:74px;background:#fff;"></div>
<div class="a" style="left:256px;top:835px;width:1px;height:74px;background:#e3e3e3;"></div>
<svg style="left:200px;top:847px" width="30" height="32" viewBox="0 0 30 32"><circle cx="15" cy="14" r="8" fill="#fde8da" opacity="0.8"/><path d="M6 4 H3 V29.6 H27.8 V4 H24.5" stroke="#00b3a8" stroke-width="2.2" fill="none"/><path d="M8 1.5 V6.5 M14.5 1.5 V6.5 M21 1.5 V6.5" stroke="#00b3a8" stroke-width="2"/><circle cx="11.2" cy="4.5" r="1" fill="#00b3a8"/><circle cx="17.8" cy="4.5" r="1" fill="#00b3a8"/><path d="M7 9.2 H22 M7 14.7 H22 M7 20 H22 M7 25 H15.5" stroke="#00b3a8" stroke-width="2"/></svg>
<div class="t" style="left:188px;top:881px;font-size:12px;color:#333;font-weight:normal;">备注信息</div>
<div class="t" style="left:273px;top:865px;font-size:12px;color:#bbb;font-weight:normal;">请输入备注信息</div>
<div class="a" style="left:273px;top:884px;width:1456px;height:1px;background:#dddddd;"></div>
<div class="a" style="left:169px;top:918px;width:1730px;height:49px;background:#fff;box-shadow:0 -2px 6px rgba(0,0,0,0.10)"></div>
<div class="a" style="left:1515px;top:926px;width:82px;height:35px;background:#fff;border:1px solid #c8c8c8;border-radius:3px"></div>
<div class="t" style="left:1540px;top:937px;font-size:16px;color:#333;font-weight:normal;">放弃</div>
<div class="a" style="left:1609px;top:926px;width:114px;height:35px;background:#fff;border:1px solid #ff8a40;border-radius:3px"></div>
<div class="t" style="left:1634px;top:937px;font-size:16px;color:#ff8a40;font-weight:normal;">保存草稿</div>
<div class="a" style="left:1735px;top:925px;width:142px;height:36px;background:#ff8a40;border-radius:3px"></div>
<div class="t" style="left:1759px;top:934px;font-size:16px;color:#fff;font-weight:normal;">保存&amp;新增</div>
<svg style="left:1842px;top:938px" width="11" height="7" viewBox="0 0 11 7"><path d="M0.7 6.3 L5.5 1.2 L10.3 6.3" stroke="#fff" stroke-width="1.4" fill="none"/></svg>
<div class="a" style="left:1884px;top:241px;width:30px;height:36px;background:#fff;box-shadow:-2px 0 6px rgba(0,0,0,0.12)"></div>
<div class="a" style="left:1884px;top:281px;width:30px;height:36px;background:#fff;box-shadow:-2px 0 6px rgba(0,0,0,0.12)"></div>
<div class="a" style="left:1884px;top:321px;width:30px;height:36px;background:#ff8a40;box-shadow:-2px 0 6px rgba(0,0,0,0.12)"></div>
<svg style="left:1893px;top:250px" width="18" height="19" viewBox="0 0 18 19"><path d="M3.2 0.8 H14.8 Q17.2 0.8 17.2 3.2 V13 L12.6 17.8 H3.2 Q0.8 17.8 0.8 15.4 V3.2 Q0.8 0.8 3.2 0.8Z" stroke="#666" stroke-width="1.2" fill="none"/><path d="M12.6 17.8 V14.2 Q12.6 13 13.8 13 H17.2" stroke="#666" stroke-width="1" fill="none"/><path d="M3.5 4 H14.5 M6.5 2.5 V5.5 M11.5 2.5 V5.5 M5 6.5 H13 V10.5 H5Z M5 8.5 H13 M3 12.5 H12 M9 10.5 V16" stroke="#777" stroke-width="0.9" fill="none"/></svg>
<svg style="left:1893px;top:290px" width="18" height="18" viewBox="0 0 18 18"><path d="M10.5 3.5 L3.5 10.5 Q1 13 3 15.2 Q5 17.2 7.5 14.8 L14.8 7.5 Q17.5 4.5 15.5 2.5 Q13.5 0.6 10.8 3.2 L5 9 Q3.8 10.3 4.8 11.3 Q5.8 12.2 7 11 L12 6" stroke="#445" stroke-width="1.2" fill="none" stroke-linecap="round"/></svg>
<svg style="left:1891px;top:329px" width="21" height="21" viewBox="0 0 21 21"><rect x="1" y="1" width="19" height="19" rx="3" stroke="#fff" stroke-width="1.5" fill="none"/><path d="M11.5 9.5 L17 4 M13 4 H17 V8 M9.5 11.5 L4 17 M4 13 V17 H8" stroke="#fff" stroke-width="1.5" fill="none"/></svg></body></html>
